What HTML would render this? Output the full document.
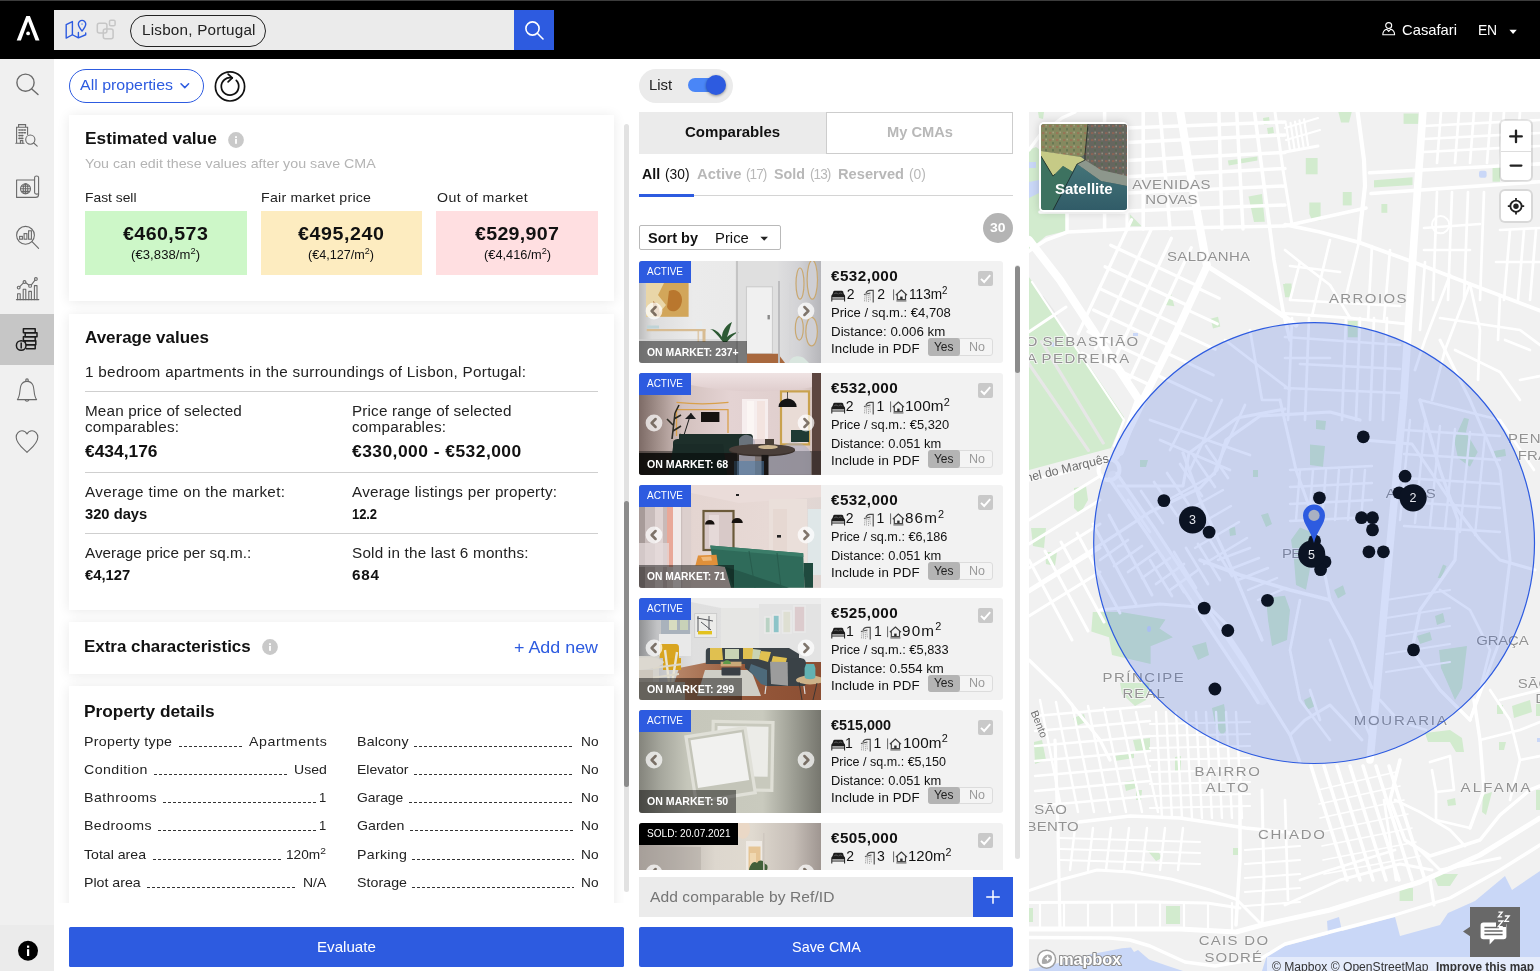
<!DOCTYPE html>
<html lang="en"><head><meta charset="utf-8"><title>Casafari CMA</title>
<style>
*{box-sizing:border-box;margin:0;padding:0}
html,body{width:1540px;height:971px;overflow:hidden;background:#fff}
body{position:relative;font-family:"Liberation Sans",sans-serif;color:#222}
.a{position:absolute}
.t{position:absolute;white-space:pre;line-height:1;color:#222;transform-origin:0 50%}
.card{position:absolute;left:69px;width:545px;background:#fff;box-shadow:0 1px 12px rgba(0,0,0,.09)}
.hr{position:absolute;left:85px;width:512.5px;height:1px;background:#cfcfcf}
.ld{position:absolute;height:1px;background:repeating-linear-gradient(90deg,#333 0,#333 3px,transparent 3px,transparent 5px)}
.item{position:absolute;left:639px;width:364px;background:#f2f2f2;border-radius:3px;overflow:hidden}
.bl{background:#2d5be0}
#root{position:absolute;left:0;top:0;width:1540px;height:971px;overflow:hidden;will-change:transform}
</style></head>
<body>
<div id="root">
<div class="a" style="left:0px;top:0px;width:1540px;height:59px;background:#000"></div>
<div class="a" style="left:0px;top:0px;width:1540px;height:1px;background:#3c3c3c"></div>
<svg class="a" style="left:14px;top:14px;" width="28" height="28" viewBox="0 0 28 28" ><polygon points="2.7,26.4 12.3,2 15.9,2 25.5,26.4 21.5,26.4 14.1,7.2 6.9,26.4" fill="#fff"/><circle cx="14.1" cy="19.4" r="1.9" fill="#fff"/></svg>
<div class="a" style="left:54px;top:10px;width:460px;height:40px;background:#ebebeb"></div>
<div class="a" style="left:514px;top:10px;width:40px;height:40px;background:#2d5be0"></div>
<svg class="a" style="left:522px;top:18px;" width="24" height="24" viewBox="0 0 24 24" ><circle cx="10.5" cy="10.5" r="6.6" fill="none" stroke="#fff" stroke-width="1.6"/><path d="M15.3 15.3 L21 21" stroke="#fff" stroke-width="1.6" stroke-linecap="round"/></svg>
<svg class="a" style="left:64px;top:18px;" width="26" height="24" viewBox="0 0 26 24" ><g fill="none" stroke="#2d5be0" stroke-width="1.4" stroke-linejoin="round" stroke-linecap="round"><path d="M2.2 6.6 L8.4 3.6 L8.4 16.75 L2.2 20.1 Z"/><path d="M8.4 16.75 L14.4 19.9 L21.7 16.75 L21.7 14.9 M14.4 14.4 L14.4 19.9"/><path d="M18.05 13.1 C16 10.6 14.35 8.4 14.35 6.1 A3.7 3.7 0 1 1 21.75 6.1 C21.75 8.4 20.1 10.6 18.05 13.1 Z"/></g><circle cx="18.05" cy="6.1" r="0.9" fill="#7fa2f2"/></svg>
<svg class="a" style="left:95px;top:18px;" width="24" height="24" viewBox="0 0 24 24" ><g fill="none" stroke="#c6c6c6" stroke-width="1.5"><rect x="2.3" y="5.2" width="9.6" height="9.8" rx="2"/><rect x="8.3" y="11.1" width="9.8" height="9.6" rx="2"/><rect x="14.5" y="2.2" width="5.6" height="5.5" rx="1.3"/></g></svg>
<div class="a" style="left:130px;top:15px;width:136px;height:31.5px;border:1.3px solid #222;border-radius:16px"></div>
<span class="t" style="left:141.50px;top:23.15px;font-size:14px;letter-spacing:0.196px;transform:scaleX(1.0900);">Lisbon, Portugal</span>
<svg class="a" style="left:1381px;top:21px;" width="16" height="16" viewBox="0 0 16 16" ><g fill="none" stroke="#fff" stroke-width="1.1" stroke-linejoin="round"><circle cx="7.7" cy="4.6" r="3"/><path d="M1.8 13.8 C1.8 10.4 4.3 8.6 5.6 8.2 L7.7 10.3 L9.8 8.2 C11.1 8.6 13.6 10.4 13.6 13.8 Z"/></g></svg>
<span class="t" style="left:1401.80px;top:22.40px;font-size:15px;color:#fff;transform:scaleX(0.9846);">Casafari</span>
<span class="t" style="left:1477.60px;top:22.40px;font-size:15px;color:#fff;letter-spacing:-0.199px;transform:scaleX(0.9300);">EN</span>
<svg class="a" style="left:1509px;top:29px;" width="9" height="6" viewBox="0 0 9 6" ><path d="M0.4 0.8 L7.8 0.8 L4.1 4.9 Z" fill="#fff"/></svg><div class="a" style="left:0px;top:59px;width:54px;height:866px;background:#f0f0f0"></div>
<div class="a" style="left:0px;top:925px;width:54px;height:46px;background:#ebebeb"></div>
<div class="a" style="left:0px;top:314px;width:54px;height:51px;background:#c6c6c6"></div>
<svg class="a" style="left:12px;top:70px;" width="30" height="30" viewBox="0 0 30 30" ><g fill="none" stroke="#6a6a6a" stroke-width="1.4" stroke-linecap="round"><circle cx="13.5" cy="12.7" r="8.6"/><path d="M19.8 19 L26 24.6"/></g></svg>
<svg class="a" style="left:12px;top:121px;" width="30" height="30" viewBox="0 0 30 30" ><g fill="none" stroke="#6a6a6a" stroke-width="1.1" stroke-linecap="round"><path d="M4.6 22.2 L4.6 6.2 L15.6 6.2 L15.6 13.5 M6.6 6.2 L6.6 3.6 L13.6 3.6 L13.6 6.2 M3.8 22.2 L12 22.2"/><path d="M7 9 h1.2 M9.6 9 h1.2 M12.2 9 h1.2 M7 11.8 h1.2 M9.6 11.8 h1.2 M12.2 11.8 h1.2 M7 14.6 h1.2 M9.6 14.6 h1.2 M7 17.4 h1.2 M9.6 17.4 h1.2" stroke-width="1.6"/><path d="M8.4 22.2 L8.4 19.6 L10.8 19.6 L10.8 22.2"/><circle cx="18.3" cy="18.6" r="4.6" fill="#f0f0f0"/><path d="M21.7 22 L25.2 25.2"/></g></svg>
<svg class="a" style="left:12px;top:172px;" width="30" height="30" viewBox="0 0 30 30" ><g fill="none" stroke="#6a6a6a" stroke-width="1.1" stroke-linejoin="round"><path d="M22.6 8 L4.6 8 L4.6 25.4 L23.6 25.4 C25.6 25.4 26.6 24 26.6 22.4 L26.6 5.4 C26.6 3.6 22.6 3.4 22.6 5.6 L22.6 20.4 C22.6 22.6 26.4 22.6 26.6 21"/><circle cx="13.5" cy="16.8" r="5"/><ellipse cx="13.5" cy="16.8" rx="2.3" ry="5"/><path d="M8.5 16.8 h10 M9.3 14.2 h8.4 M9.3 19.4 h8.4 M13.5 11.8 v10"/></g></svg>
<svg class="a" style="left:12px;top:223px;" width="30" height="30" viewBox="0 0 30 30" ><g fill="none" stroke="#6a6a6a" stroke-width="1.1" stroke-linecap="round"><circle cx="13.5" cy="12.3" r="8.9"/><path d="M20 18.6 L26.6 25.4"/><rect x="7.6" y="13.4" width="2.8" height="2.8"/><rect x="12.1" y="10.6" width="2.8" height="5.6"/><rect x="16.6" y="7.8" width="2.8" height="8.4"/></g></svg>
<svg class="a" style="left:12px;top:274px;" width="30" height="30" viewBox="0 0 30 30" ><g fill="none" stroke="#6a6a6a" stroke-width="1.1" stroke-linecap="round" stroke-linejoin="round"><path d="M4.4 25.6 h22.4"/><path d="M5.6 25.6 v-5.8 h2.6 v5.8 M11.2 25.6 v-10.4 h2.6 v10.4 M16.8 25.6 v-8.2 h2.6 v8.2 M22.4 25.6 v-14 h2.6 v14"/><path d="M7.8 12.6 L11.2 9.2 M13.8 8.8 L16.8 11 M19.4 10.8 L23 6.2"/><circle cx="6.7" cy="13.6" r="1.4"/><circle cx="12.5" cy="8" r="1.4"/><circle cx="18.1" cy="11.9" r="1.4"/><circle cx="23.9" cy="5" r="1.4"/></g></svg>
<svg class="a" style="left:12px;top:325px;" width="30" height="30" viewBox="0 0 30 30" ><g fill="none" stroke="#1c1c1c" stroke-width="1.5" stroke-linejoin="round"><rect x="11.4" y="3.8" width="11.8" height="3.9" /><rect x="13.2" y="7.7" width="11.8" height="4.1" /><rect x="11.4" y="11.8" width="11.8" height="4" /><rect x="13.2" y="15.8" width="10.6" height="4" /><path d="M14 19.8 h9.2 v4 h-9.2"/><circle cx="9.2" cy="20.5" r="4.8" fill="#c6c6c6"/><path d="M9.2 17.6 v5.8"/></g></svg>
<svg class="a" style="left:12px;top:376px;" width="30" height="30" viewBox="0 0 30 30" ><g fill="none" stroke="#6a6a6a" stroke-width="1.1" stroke-linejoin="round" stroke-linecap="round"><path d="M5.4 23.6 C8.6 19.6 7.4 13 9 9.4 C10.2 6.6 12.4 5.4 15 5.4 C17.6 5.4 19.8 6.6 21 9.4 C22.6 13 21.4 19.6 24.6 23.6 Z"/><circle cx="15" cy="4.2" r="1.3"/><path d="M13.2 23.8 C13.6 25.6 16.4 25.6 16.8 23.8"/></g></svg>
<svg class="a" style="left:12px;top:427px;" width="30" height="30" viewBox="0 0 30 30" ><path d="M15 25.4 C11 21.4 4.2 16.4 4.2 10.2 C4.2 6.4 7 3.8 10 3.8 C12.2 3.8 14 5 15 7 C16 5 17.8 3.8 20 3.8 C23 3.8 25.8 6.4 25.8 10.2 C25.8 16.4 19 21.4 15 25.4 Z" fill="none" stroke="#6a6a6a" stroke-width="1.1" stroke-linejoin="round"/></svg>
<svg class="a" style="left:17px;top:940px;" width="22" height="22" viewBox="0 0 22 22" ><circle cx="11" cy="10.7" r="10" fill="#000"/><rect x="10" y="9.2" width="2.2" height="6.8" fill="#fff"/><rect x="10" y="5.6" width="2.2" height="2.2" fill="#fff"/></svg><div class="a" style="left:69px;top:69px;width:135px;height:34px;border:1.2px solid #2d5be0;border-radius:17px"></div>
<span class="t" style="left:80.00px;top:77.30px;font-size:15px;color:#2d5be0;transform:scaleX(1.0623);">All properties</span>
<svg class="a" style="left:179px;top:81px;" width="12" height="10" viewBox="0 0 12 10" ><path d="M2 2.8 L5.8 6.6 L9.6 2.8" fill="none" stroke="#2d5be0" stroke-width="1.5" stroke-linecap="round" stroke-linejoin="round"/></svg>
<svg class="a" style="left:213px;top:69.5px;" width="34" height="34" viewBox="0 0 34 34" ><g fill="none" stroke="#111" stroke-width="1.7" stroke-linecap="round" stroke-linejoin="round"><circle cx="17" cy="16.4" r="14.6"/><path d="M23.26 10.36 A8.7 8.7 0 1 1 19.18 7.98"/><path d="M15.1 4.1 L19.3 7.9 L15.1 11.9"/></g></svg>
<div class="a" style="left:639px;top:69px;width:94px;height:34px;background:#ebebeb;border-radius:17px"></div>
<span class="t" style="left:649.30px;top:77.30px;font-size:15px;transform:scaleX(0.9938);">List</span>
<div class="a" style="left:688.3px;top:78.3px;width:33px;height:13.6px;background:#4a86f7;border-radius:7px"></div>
<div class="a" style="left:705.6px;top:75px;width:20px;height:20px;background:#2d5be0;border-radius:50%;box-shadow:0 1px 3px rgba(0,0,0,.4)"></div><div class="a" style="left:54px;top:106px;width:570px;height:797px;overflow:hidden">
<div class="a" style="left:-54px;top:-106px;width:1px;height:1px">
<div class="card" style="top:114.5px;height:186px"></div>
<span class="t" style="left:85.20px;top:130.29px;font-size:16.2px;font-weight:700;color:#111;transform:scaleX(1.0692);">Estimated value</span>
<svg class="a" style="left:226.6px;top:130.7px;" width="18" height="18" viewBox="0 0 18 18" ><circle cx="9" cy="9" r="7.9" fill="#c9c9c9"/><rect x="8.1" y="7.9" width="1.8" height="4.9" fill="#fff"/><rect x="8.1" y="5.2" width="1.8" height="1.8" fill="#fff"/></svg>
<span class="t" style="left:85.00px;top:156.57px;font-size:13.5px;color:#b4b4b4;transform:scaleX(1.0545);">You can edit these values after you save CMA</span>
<span class="t" style="left:85.00px;top:190.80px;font-size:13px;transform:scaleX(1.0639);">Fast sell</span>
<span class="t" style="left:260.80px;top:190.80px;font-size:13px;letter-spacing:0.212px;transform:scaleX(1.0900);">Fair market price</span>
<span class="t" style="left:436.50px;top:190.80px;font-size:13px;letter-spacing:0.379px;transform:scaleX(1.0900);">Out of market</span>
<div class="a" style="left:85px;top:211px;width:161.6px;height:63.6px;background:#cdf7c8"></div>
<span class="t" style="left:123.40px;top:224.76px;font-size:18px;font-weight:700;color:#111;letter-spacing:0.389px;transform:scaleX(1.0900);">€460,573</span>
<span class="t" style="left:131.20px;top:249.14px;font-size:12px;color:#111;letter-spacing:0.067px;transform:scaleX(1.0900);">(€3,838/m<span style="font-size:8.6px;position:relative;top:-5px;letter-spacing:0">2</span>)</span>
<div class="a" style="left:260.6px;top:211px;width:161.6px;height:63.6px;background:#fdecc0"></div>
<span class="t" style="left:298.40px;top:224.76px;font-size:18px;font-weight:700;color:#111;letter-spacing:0.546px;transform:scaleX(1.0900);">€495,240</span>
<span class="t" style="left:308.40px;top:249.14px;font-size:12px;color:#111;transform:scaleX(1.0507);">(€4,127/m<span style="font-size:8.6px;position:relative;top:-5px;letter-spacing:0">2</span>)</span>
<div class="a" style="left:436.2px;top:211px;width:161.6px;height:63.6px;background:#ffdfe1"></div>
<span class="t" style="left:475.10px;top:224.76px;font-size:18px;font-weight:700;color:#111;letter-spacing:0.258px;transform:scaleX(1.0900);">€529,907</span>
<span class="t" style="left:483.50px;top:249.14px;font-size:12px;color:#111;transform:scaleX(1.0667);">(€4,416/m<span style="font-size:8.6px;position:relative;top:-5px;letter-spacing:0">2</span>)</span>
<div class="card" style="top:313.5px;height:296.3px"></div>
<span class="t" style="left:85.00px;top:329.09px;font-size:16.2px;font-weight:700;color:#111;transform:scaleX(1.0492);">Average values</span>
<span class="t" style="left:85.00px;top:364.95px;font-size:14px;letter-spacing:0.271px;transform:scaleX(1.0900);">1 bedroom apartments in the surroundings of Lisbon, Portugal:</span>
<div class="hr" style="top:391px"></div>
<span class="t" style="left:85.00px;top:404.15px;font-size:14px;letter-spacing:0.143px;transform:scaleX(1.0900);">Mean price of selected</span>
<span class="t" style="left:85.00px;top:420.15px;font-size:14px;letter-spacing:0.199px;transform:scaleX(1.0900);">comparables:</span>
<span class="t" style="left:85.00px;top:443.66px;font-size:16px;font-weight:700;color:#111;transform:scaleX(1.0864);">€434,176</span>
<span class="t" style="left:351.80px;top:404.15px;font-size:14px;letter-spacing:0.142px;transform:scaleX(1.0900);">Price range of selected</span>
<span class="t" style="left:351.80px;top:420.15px;font-size:14px;letter-spacing:0.199px;transform:scaleX(1.0900);">comparables:</span>
<span class="t" style="left:351.80px;top:443.66px;font-size:16px;font-weight:700;color:#111;letter-spacing:0.419px;transform:scaleX(1.0900);">€330,000 - €532,000</span>
<div class="hr" style="top:472px"></div>
<span class="t" style="left:85.00px;top:485.15px;font-size:14px;letter-spacing:0.303px;transform:scaleX(1.0900);">Average time on the market:</span>
<span class="t" style="left:85.00px;top:506.85px;font-size:14px;font-weight:700;color:#111;transform:scaleX(1.0512);">320 days</span>
<span class="t" style="left:351.80px;top:485.15px;font-size:14px;letter-spacing:0.215px;transform:scaleX(1.0900);">Average listings per property:</span>
<span class="t" style="left:351.80px;top:506.85px;font-size:14px;font-weight:700;color:#111;letter-spacing:-0.123px;transform:scaleX(0.9300);">12.2</span>
<div class="hr" style="top:533px"></div>
<span class="t" style="left:85.00px;top:546.15px;font-size:14px;letter-spacing:0.009px;transform:scaleX(1.0900);">Average price per sq.m.:</span>
<span class="t" style="left:85.00px;top:568.35px;font-size:14px;font-weight:700;color:#111;transform:scaleX(1.0554);">€4,127</span>
<span class="t" style="left:351.80px;top:546.15px;font-size:14px;letter-spacing:0.189px;transform:scaleX(1.0900);">Sold in the last 6 months:</span>
<span class="t" style="left:351.80px;top:568.35px;font-size:14px;font-weight:700;color:#111;letter-spacing:0.706px;transform:scaleX(1.0900);">684</span>
<div class="card" style="top:621.8px;height:51.8px"></div>
<span class="t" style="left:84.30px;top:638.29px;font-size:16.2px;font-weight:700;color:#111;transform:scaleX(1.0466);">Extra characteristics</span>
<svg class="a" style="left:260.5px;top:637.8px;" width="18" height="18" viewBox="0 0 18 18" ><circle cx="9" cy="9" r="7.9" fill="#c9c9c9"/><rect x="8.1" y="7.9" width="1.8" height="4.9" fill="#fff"/><rect x="8.1" y="5.2" width="1.8" height="1.8" fill="#fff"/></svg>
<span class="t" style="left:514.30px;top:638.83px;font-size:16.5px;color:#2d5be0;transform:scaleX(1.0834);">+ Add new</span>
<div class="card" style="top:685.5px;height:260px"></div>
<span class="t" style="left:84.30px;top:702.79px;font-size:16.2px;font-weight:700;color:#111;transform:scaleX(1.0682);">Property details</span>
<span class="t" style="left:84.30px;top:735.00px;font-size:13px;letter-spacing:0.284px;transform:scaleX(1.0900);">Property type</span>
<span class="t" style="left:248.50px;top:735.00px;font-size:13px;letter-spacing:0.544px;transform:scaleX(1.0900);">Apartments</span>
<div class="ld" style="left:178.6px;top:745.5px;width:64.4px"></div>
<span class="t" style="left:357.00px;top:735.00px;font-size:13px;letter-spacing:0.166px;transform:scaleX(1.0900);">Balcony</span>
<span class="t" style="left:580.50px;top:735.00px;font-size:13px;transform:scaleX(1.0526);">No</span>
<div class="ld" style="left:413.8px;top:745.5px;width:160.0px"></div>
<span class="t" style="left:84.30px;top:763.00px;font-size:13px;letter-spacing:0.403px;transform:scaleX(1.0900);">Condition</span>
<span class="t" style="left:293.50px;top:763.00px;font-size:13px;transform:scaleX(1.0804);">Used</span>
<div class="ld" style="left:154.0px;top:773.5px;width:134.0px"></div>
<span class="t" style="left:357.00px;top:763.00px;font-size:13px;transform:scaleX(1.0796);">Elevator</span>
<span class="t" style="left:580.50px;top:763.00px;font-size:13px;transform:scaleX(1.0526);">No</span>
<div class="ld" style="left:413.8px;top:773.5px;width:160.0px"></div>
<span class="t" style="left:84.30px;top:791.00px;font-size:13px;letter-spacing:0.478px;transform:scaleX(1.0900);">Bathrooms</span>
<span class="t" style="left:319.07px;top:791.00px;font-size:13px;">1</span>
<div class="ld" style="left:163.3px;top:801.5px;width:152.5px"></div>
<span class="t" style="left:357.00px;top:791.00px;font-size:13px;transform:scaleX(1.0674);">Garage</span>
<span class="t" style="left:580.50px;top:791.00px;font-size:13px;transform:scaleX(1.0526);">No</span>
<div class="ld" style="left:408.6px;top:801.5px;width:165.2px"></div>
<span class="t" style="left:84.30px;top:819.00px;font-size:13px;letter-spacing:0.382px;transform:scaleX(1.0900);">Bedrooms</span>
<span class="t" style="left:319.07px;top:819.00px;font-size:13px;">1</span>
<div class="ld" style="left:158.1px;top:829.5px;width:157.7px"></div>
<span class="t" style="left:357.00px;top:819.00px;font-size:13px;transform:scaleX(1.0900);">Garden</span>
<span class="t" style="left:580.50px;top:819.00px;font-size:13px;transform:scaleX(1.0526);">No</span>
<div class="ld" style="left:409.6px;top:829.5px;width:164.2px"></div>
<span class="t" style="left:84.30px;top:848.00px;font-size:13px;transform:scaleX(1.0859);">Total area</span>
<span class="t" style="left:286.40px;top:848.00px;font-size:13px;transform:scaleX(1.0504);">120m<span style="font-size:9.8px;position:relative;top:-5.2px;letter-spacing:0">2</span></span>
<div class="ld" style="left:152.6px;top:858.5px;width:128.3px"></div>
<span class="t" style="left:357.00px;top:848.00px;font-size:13px;letter-spacing:0.268px;transform:scaleX(1.0900);">Parking</span>
<span class="t" style="left:580.50px;top:848.00px;font-size:13px;transform:scaleX(1.0526);">No</span>
<div class="ld" style="left:412.1px;top:858.5px;width:161.7px"></div>
<span class="t" style="left:84.30px;top:876.00px;font-size:13px;transform:scaleX(1.0894);">Plot area</span>
<span class="t" style="left:303.00px;top:876.00px;font-size:13px;transform:scaleX(1.0751);">N/A</span>
<div class="ld" style="left:147.3px;top:886.5px;width:150.2px"></div>
<span class="t" style="left:357.00px;top:876.00px;font-size:13px;letter-spacing:0.054px;transform:scaleX(1.0900);">Storage</span>
<span class="t" style="left:580.50px;top:876.00px;font-size:13px;transform:scaleX(1.0526);">No</span>
<div class="ld" style="left:412.3px;top:886.5px;width:161.5px"></div>
</div></div>
<div class="a" style="left:624.2px;top:124px;width:5.3px;height:768px;background:#e2e2e2;border-radius:3px"></div>
<div class="a" style="left:624.2px;top:501px;width:5.3px;height:286px;background:#8c8c8c;border-radius:3px"></div>
<div class="a" style="left:69px;top:927px;width:554.5px;height:40px;background:#2d5be0;border-radius:1.5px"></div>
<span class="t" style="left:316.90px;top:939.93px;font-size:14.5px;color:#fff;transform:scaleX(1.0419);">Evaluate</span><div class="a" style="left:639px;top:112px;width:187px;height:41.5px;background:#ebebeb"></div>
<div class="a" style="left:826px;top:112px;width:187px;height:41.5px;background:#fff;border:1px solid #cdcdcd"></div>
<span class="t" style="left:684.80px;top:124.64px;font-size:14.6px;font-weight:700;color:#111;transform:scaleX(1.0295);">Comparables</span>
<span class="t" style="left:886.60px;top:124.64px;font-size:14.6px;font-weight:700;color:#b8b8b8;transform:scaleX(1.0048);">My CMAs</span>
<span class="t" style="left:641.80px;top:166.84px;font-size:14.6px;font-weight:700;color:#111;transform:scaleX(0.9702);">All</span>
<span class="t" style="left:665.00px;top:166.84px;font-size:14.6px;color:#111;transform:scaleX(0.9440);">(30)</span>
<span class="t" style="left:697.00px;top:166.84px;font-size:14.6px;font-weight:700;color:#b8b8b8;transform:scaleX(1.0157);">Active</span>
<span class="t" style="left:746.30px;top:166.84px;font-size:14.6px;color:#b8b8b8;letter-spacing:-1.000px;transform:scaleX(0.9300);">(17)</span>
<span class="t" style="left:774.40px;top:166.84px;font-size:14.6px;font-weight:700;color:#b8b8b8;transform:scaleX(0.9802);">Sold</span>
<span class="t" style="left:810.30px;top:166.84px;font-size:14.6px;color:#b8b8b8;letter-spacing:-1.000px;transform:scaleX(0.9300);">(13)</span>
<span class="t" style="left:838.30px;top:166.84px;font-size:14.6px;font-weight:700;color:#b8b8b8;transform:scaleX(1.0043);">Reserved</span>
<span class="t" style="left:909.20px;top:166.84px;font-size:14.6px;color:#b8b8b8;transform:scaleX(0.9471);">(0)</span>
<div class="a" style="left:639px;top:194.6px;width:374px;height:1px;background:#d4d4d4"></div>
<div class="a" style="left:639px;top:193.8px;width:54.6px;height:3.2px;background:#2d5be0"></div>
<div class="a" style="left:639px;top:225.2px;width:141.5px;height:25.3px;border:1px solid #b9b9b9;border-radius:2px;background:#fff"></div>
<span class="t" style="left:648.00px;top:230.64px;font-size:14.6px;font-weight:700;color:#111;transform:scaleX(0.9944);">Sort by</span>
<span class="t" style="left:714.50px;top:230.64px;font-size:14.6px;color:#111;transform:scaleX(1.0165);">Price</span>
<svg class="a" style="left:759.5px;top:236px;" width="9" height="6" viewBox="0 0 9 6" ><path d="M0.4 0.8 L8 0.8 L4.2 4.8 Z" fill="#222"/></svg>
<div class="a" style="left:982.7px;top:213px;width:30px;height:30px;background:#b4b4b4;border-radius:50%"></div>
<span class="t" style="left:989.85px;top:221.30px;font-size:13px;font-weight:700;color:#fff;transform:scaleX(1.0713);">30</span>
<div class="a" style="left:630px;top:255px;width:390px;height:614.6px;overflow:hidden">
<div class="a" style="left:-630px;top:-255px;width:1px;height:1px">
<div class="item" style="top:261px;height:102px"></div>
<svg class="a" style="left:639px;top:261px;border-radius:3px 0 0 3px" width="182" height="102" viewBox="0 0 182 102" preserveAspectRatio="none"><defs><linearGradient id="p1a" x1="0" x2="1" y1="0" y2="0"><stop offset="0" stop-color="#bcbcbc"/><stop offset=".07" stop-color="#dcdcdc"/><stop offset=".3" stop-color="#ebebeb"/><stop offset="1" stop-color="#e6e6e6"/></linearGradient>
<linearGradient id="p1b" x1="0" x2="1"><stop offset="0" stop-color="#dededf"/><stop offset=".5" stop-color="#d2d2d5"/><stop offset="1" stop-color="#b6b6ba"/></linearGradient></defs>
<rect width="182" height="102" fill="url(#p1a)"/>
<rect x="96.6" width="43" height="102" fill="#dfdfdf"/>
<rect x="139" width="43" height="102" fill="url(#p1b)"/>
<rect x="0" y="78" width="97" height="24" fill="#d2d2d2" opacity=".7"/>
<rect x="7" y="22" width="42.6" height="33.8" fill="#d2a65a"/>
<path d="M7 22 h18 l-6 12 l8 10 l-10 11.8 h-10z" fill="#e9d6a8"/><path d="M30 30 c8 -4 16 4 12 14 c-3 8 -12 8 -14 2z" fill="#b9772e"/>
<path d="M14 40 c4 2 8 8 6 15 h-6z" fill="#a96a2a" opacity=".7"/>
<rect x="7.7" y="68" width="59" height="2.2" fill="#d8bc92"/><rect x="63.5" y="70" width="3" height="11" fill="#d8bc92"/><rect x="58.5" y="70" width="1.6" height="11" fill="#d8bc92" opacity=".7"/>
<rect x="8" y="64.5" width="12" height="3" fill="#bfd3d6"/><rect x="57" y="60" width="6" height="8" fill="#e8ecee"/>
<path d="M84 81 c-6 -8 -10 -12 -13 -13 c5 0 9 3 12 8 c0 -6 4 -12 10 -15 c-2 5 -3 10 -5 15 c3 -3 8 -5 12 -5 c-5 2 -9 6 -12 10z" fill="#2d5a34"/>
<rect x="97" y="0" width="2" height="102" fill="#c4c4c4"/>
<rect x="107.4" y="25.8" width="26" height="67" fill="#f0f0f0" stroke="#cacaca" stroke-width="1"/>
<rect x="128.5" y="54" width="2.4" height="4.4" fill="#8a8a8a"/>
<path d="M108 92.7 L139 92.7 L146 102 L108 102 Z" fill="#a8683e"/>
<rect x="139" y="20" width="2" height="102" fill="#bdbdbf"/><rect x="150" y="22" width="2.4" height="72" fill="#d6d6d8"/>
<g fill="#cfcfd4" stroke="#c9a870" stroke-width="1.2"><ellipse cx="161" cy="22.6" rx="4" ry="15.6"/><ellipse cx="173.3" cy="18.7" rx="5.2" ry="19.5"/><ellipse cx="160.3" cy="67.4" rx="4" ry="11.7"/><ellipse cx="172.6" cy="70.6" rx="5.8" ry="14.3"/></g>
<path d="M150 102 c2 -8 12 -8 16 -4 l4 4z" fill="#d9e6df"/></svg>
<div class="a" style="left:639px;top:261px;width:52px;height:21.8px;background:#2d5be0;border-radius:3px 0 0 0"></div>
<span class="t" style="left:647.00px;top:267.38px;font-size:10.3px;color:#fff;transform:scaleX(0.9677);">ACTIVE</span>
<div class="a" style="left:639px;top:341.4px;width:108px;height:21.599999999999994px;background:rgba(0,0,0,.45);border-radius:0 0 0 3px"></div>
<span class="t" style="left:647.00px;top:347.77px;font-size:10.2px;font-weight:700;color:#fff;transform:scaleX(1.0208);">ON MARKET: 237+</span>
<svg class="a" style="left:645px;top:302px;" width="18" height="18" viewBox="0 0 18 18" ><g transform="translate(9,9)"><circle r="8.4" fill="rgba(255,255,255,.72)"/><path d="M1.6 -4 L-2.4 0 L1.6 4" fill="none" stroke="rgba(80,66,54,.72)" stroke-width="2.5" stroke-linecap="round" stroke-linejoin="round"/></g></svg>
<svg class="a" style="left:797px;top:302px;" width="18" height="18" viewBox="0 0 18 18" ><g transform="translate(9,9)"><circle r="8.4" fill="rgba(255,255,255,.72)"/><path d="M-1.6 -4 L2.4 0 L-1.6 4" fill="none" stroke="rgba(80,66,54,.72)" stroke-width="2.5" stroke-linecap="round" stroke-linejoin="round"/></g></svg>
<span class="t" style="left:831.00px;top:269.25px;font-size:14px;font-weight:700;color:#111;letter-spacing:0.411px;transform:scaleX(1.0900);">€532,000</span>
<svg class="a" style="left:831px;top:290.4px;" width="15" height="12" viewBox="0 0 15 12" ><g fill="#1c1c1c"><path d="M0.3 11.6 L0.3 6.2 C0.3 5.4 0.6 5 1.2 4.6 L13.2 4.6 C13.8 5 14.1 5.4 14.1 6.2 L14.1 11.6 L13.1 11.6 L13.1 9.6 L1.3 9.6 L1.3 11.6 Z"/><path d="M1.2 5 L2.4 1.4 C2.6 0.9 3 0.7 3.6 0.7 L10.8 0.7 C11.4 0.7 11.8 0.9 12 1.4 L13.2 5 Z"/></g><path d="M3.2 4.2 C3.4 2.6 6.6 2.6 6.9 4.2 M7.5 4.2 C7.8 2.6 11 2.6 11.2 4.2" stroke="#777" stroke-width="0.7" fill="none"/><rect x="1.3" y="7.3" width="11.8" height="1.3" fill="#d8d8d8"/></svg>
<span class="t" style="left:846.70px;top:287.25px;font-size:14px;color:#111;">2</span>
<svg class="a" style="left:863px;top:289.2px;" width="12" height="14" viewBox="0 0 12 14" ><g fill="none" stroke="#4a4a4a" stroke-width="1.15"><path d="M10.2 13.6 L10.2 1.4 L7 1.4 C5 1.4 3.6 2.6 3 4"/></g><path d="M0.8 4.9 L7.4 3.4 L7.6 4.4 L1 5.9 Z" fill="#4a4a4a"/><g stroke="#8a8a8a" stroke-width="0.75" stroke-dasharray="1.3 0.8" fill="none"><path d="M2 6.4 L1.4 13 M3.6 6.2 L3.4 13 M5.2 5.8 L5.6 13 M6.8 5.4 L7.4 12"/></g></svg>
<span class="t" style="left:877.30px;top:287.25px;font-size:14px;color:#111;">2</span>
<svg class="a" style="left:892.7px;top:289.4px;" width="15" height="14" viewBox="0 0 15 14" ><path d="M0.6 0.4 L0.6 11.2" stroke="#555" stroke-width="0.9"/><g fill="none" stroke="#3a3a3a" stroke-width="1.15" stroke-linejoin="round"><path d="M2.8 6.2 L8.4 1 L14 6.2 M4.3 5.2 L4.3 10.6 L12.5 10.6 L12.5 5.2"/></g><rect x="7.2" y="7.6" width="2.4" height="3" fill="#2a2a2a"/><rect x="3.4" y="10.8" width="10" height="1.9" fill="#8e8e8e"/></svg>
<span class="t" style="left:909.00px;top:287.25px;font-size:14px;color:#111;transform:scaleX(0.9735);">113m<span style="font-size:10px;position:relative;top:-5.6px;letter-spacing:0">2</span></span>
<span class="t" style="left:831.00px;top:307.27px;font-size:12.2px;color:#111;transform:scaleX(1.0717);">Price / sq.m.: €4,708</span>
<span class="t" style="left:831.00px;top:326.27px;font-size:12.2px;color:#111;letter-spacing:0.031px;transform:scaleX(1.0900);">Distance: 0.006 km</span>
<span class="t" style="left:831.00px;top:343.47px;font-size:12.2px;color:#111;letter-spacing:0.097px;transform:scaleX(1.0900);">Include in PDF</span>
<div class="a" style="left:928px;top:338.3px;width:65px;height:17.4px;border:1px solid #dcdcdc;border-radius:3px;background:#f4f4f4"></div>
<div class="a" style="left:928px;top:338.3px;width:32px;height:17.4px;background:#b4b4b4;border-radius:3px"></div>
<span class="t" style="left:934.25px;top:340.54px;font-size:12px;transform:scaleX(0.9960);">Yes</span>
<span class="t" style="left:968.50px;top:340.54px;font-size:12px;color:#9a9a9a;transform:scaleX(1.0428);">No</span>
<svg class="a" style="left:978px;top:271px;" width="15" height="15" viewBox="0 0 15 15" ><rect width="15" height="15" rx="2" fill="#c9c9c9"/><path d="M3 7.8 L6.2 11 L12.2 4.2" fill="none" stroke="#fff" stroke-width="1.9"/></svg>
<div class="item" style="top:373px;height:101.8px"></div>
<svg class="a" style="left:639px;top:373px;border-radius:3px 0 0 3px" width="182" height="101.8" viewBox="0 0 182 101.8" preserveAspectRatio="none"><defs><linearGradient id="p2a" x1="0" x2="1"><stop offset="0" stop-color="#7d6b66"/><stop offset=".12" stop-color="#a89691"/><stop offset=".24" stop-color="#d3c1be"/><stop offset=".5" stop-color="#e4d3d3"/><stop offset=".9" stop-color="#dfcecc"/><stop offset="1" stop-color="#c8b7b3"/></linearGradient>
<linearGradient id="p2b" x1="0" x2="0" y1="0" y2="1"><stop offset="0" stop-color="#efe3e3"/><stop offset="1" stop-color="#dfcdcd"/></linearGradient></defs>
<rect width="182" height="101.8" fill="url(#p2a)"/>
<path d="M52 0 H174 V14 C140 20 90 20 52 12Z" fill="url(#p2b)"/>
<rect x="103" y="26" width="26" height="40" fill="#f6eeee"/><rect x="108" y="28" width="7" height="38" fill="#fbf6f4"/><rect x="118" y="28" width="8" height="38" fill="#f3e4e0"/>
<g fill="none" stroke="#d9a04a" stroke-width="1.3"><path d="M37.5 29.4 C55 31.4 72 31.4 89.5 29.4"/><path d="M37.5 63 V36.6 H89 V60"/></g>
<rect x="62" y="39" width="18.4" height="10" fill="#15120f"/>
<path d="M33 66 L36 40 M36 40 l4 -8 M35 46 l7 -4 M34 52 l-6 -6 M34 58 l8 -5" stroke="#2b2a22" stroke-width="1.6" fill="none"/>
<path d="M46 46 l6 -6 l5 6z" fill="#1b1b1b"/><path d="M52 40 L45 62" stroke="#1b1b1b" stroke-width="1"/>
<rect x="142" y="18.4" width="28" height="53" fill="#e9dcd6" stroke="#c9a24e" stroke-width="2.2"/>
<rect x="152" y="57" width="18" height="12" fill="#1f3a33"/>
<path d="M139.5 34 a9.1 8.6 0 0 1 18.2 0z" fill="#141414"/><rect x="148.2" y="19" width=".8" height="7" fill="#333"/>
<rect x="173" width="9" height="101.8" fill="#5d4640"/>
<rect x="0" y="78" width="182" height="24" fill="#2a2624" opacity=".55"/><rect x="0" y="80" width="100" height="22" fill="#161412" opacity=".8"/>
<path d="M40 62 C40 60 42 61 44 61 H110 C113 61 114 62 114 65 V80 H34 V70 C34 67 36 66 40 66Z" fill="#1d2f2a"/>
<path d="M34 74 C34 71 36 71 38 71 H84 L88 101.8 H30Z" fill="#1a2b27"/>
<path d="M100 101.8 V66 C104 60 112 60 116 68 V101.8Z M124 101.8 C126 74 150 70 162 80 V101.8Z M140 101.8 V78 C146 66 166 66 172 80 V101.8Z" fill="#a9acc0" opacity=".55"/>
<ellipse cx="123" cy="77.4" rx="33" ry="6" fill="#3a302c"/><ellipse cx="123" cy="76.4" rx="33" ry="5.4" fill="#4a3f3a"/>
<rect x="122.5" y="82" width="7" height="20" fill="#191615"/>
<ellipse cx="129" cy="74" rx="10" ry="2" fill="#cdb690"/><rect x="126" y="66" width="9" height="6" fill="#4a4038"/>
<rect x="95" y="88" width="30" height="14" fill="#4d7aa6" opacity=".55"/></svg>
<div class="a" style="left:639px;top:373px;width:52px;height:21.8px;background:#2d5be0;border-radius:3px 0 0 0"></div>
<span class="t" style="left:647.00px;top:379.38px;font-size:10.3px;color:#fff;transform:scaleX(0.9677);">ACTIVE</span>
<div class="a" style="left:639px;top:453.4px;width:97.7px;height:21.39999999999999px;background:rgba(0,0,0,.45);border-radius:0 0 0 3px"></div>
<span class="t" style="left:647.00px;top:459.77px;font-size:10.2px;font-weight:700;color:#fff;transform:scaleX(1.0394);">ON MARKET: 68</span>
<svg class="a" style="left:645px;top:414px;" width="18" height="18" viewBox="0 0 18 18" ><g transform="translate(9,9)"><circle r="8.4" fill="rgba(255,255,255,.72)"/><path d="M1.6 -4 L-2.4 0 L1.6 4" fill="none" stroke="rgba(80,66,54,.72)" stroke-width="2.5" stroke-linecap="round" stroke-linejoin="round"/></g></svg>
<svg class="a" style="left:797px;top:414px;" width="18" height="18" viewBox="0 0 18 18" ><g transform="translate(9,9)"><circle r="8.4" fill="rgba(255,255,255,.72)"/><path d="M-1.6 -4 L2.4 0 L-1.6 4" fill="none" stroke="rgba(80,66,54,.72)" stroke-width="2.5" stroke-linecap="round" stroke-linejoin="round"/></g></svg>
<span class="t" style="left:831.00px;top:381.25px;font-size:14px;font-weight:700;color:#111;letter-spacing:0.411px;transform:scaleX(1.0900);">€532,000</span>
<svg class="a" style="left:831px;top:402.4px;" width="15" height="12" viewBox="0 0 15 12" ><g fill="#1c1c1c"><path d="M0.3 11.6 L0.3 6.2 C0.3 5.4 0.6 5 1.2 4.6 L13.2 4.6 C13.8 5 14.1 5.4 14.1 6.2 L14.1 11.6 L13.1 11.6 L13.1 9.6 L1.3 9.6 L1.3 11.6 Z"/><path d="M1.2 5 L2.4 1.4 C2.6 0.9 3 0.7 3.6 0.7 L10.8 0.7 C11.4 0.7 11.8 0.9 12 1.4 L13.2 5 Z"/></g><path d="M3.2 4.2 C3.4 2.6 6.6 2.6 6.9 4.2 M7.5 4.2 C7.8 2.6 11 2.6 11.2 4.2" stroke="#777" stroke-width="0.7" fill="none"/><rect x="1.3" y="7.3" width="11.8" height="1.3" fill="#d8d8d8"/></svg>
<span class="t" style="left:845.70px;top:399.25px;font-size:14px;color:#111;">2</span>
<svg class="a" style="left:862.8px;top:401.2px;" width="12" height="14" viewBox="0 0 12 14" ><g fill="none" stroke="#4a4a4a" stroke-width="1.15"><path d="M10.2 13.6 L10.2 1.4 L7 1.4 C5 1.4 3.6 2.6 3 4"/></g><path d="M0.8 4.9 L7.4 3.4 L7.6 4.4 L1 5.9 Z" fill="#4a4a4a"/><g stroke="#8a8a8a" stroke-width="0.75" stroke-dasharray="1.3 0.8" fill="none"><path d="M2 6.4 L1.4 13 M3.6 6.2 L3.4 13 M5.2 5.8 L5.6 13 M6.8 5.4 L7.4 12"/></g></svg>
<span class="t" style="left:876.50px;top:399.25px;font-size:14px;color:#111;">1</span>
<svg class="a" style="left:889.9px;top:401.4px;" width="15" height="14" viewBox="0 0 15 14" ><path d="M0.6 0.4 L0.6 11.2" stroke="#555" stroke-width="0.9"/><g fill="none" stroke="#3a3a3a" stroke-width="1.15" stroke-linejoin="round"><path d="M2.8 6.2 L8.4 1 L14 6.2 M4.3 5.2 L4.3 10.6 L12.5 10.6 L12.5 5.2"/></g><rect x="7.2" y="7.6" width="2.4" height="3" fill="#2a2a2a"/><rect x="3.4" y="10.8" width="10" height="1.9" fill="#8e8e8e"/></svg>
<span class="t" style="left:905.30px;top:399.25px;font-size:14px;color:#111;letter-spacing:0.104px;transform:scaleX(1.0900);">100m<span style="font-size:10px;position:relative;top:-5.6px;letter-spacing:0">2</span></span>
<span class="t" style="left:831.00px;top:419.27px;font-size:12.2px;color:#111;transform:scaleX(1.0574);">Price / sq.m.: €5,320</span>
<span class="t" style="left:831.00px;top:438.27px;font-size:12.2px;color:#111;transform:scaleX(1.0563);">Distance: 0.051 km</span>
<span class="t" style="left:831.00px;top:455.47px;font-size:12.2px;color:#111;letter-spacing:0.097px;transform:scaleX(1.0900);">Include in PDF</span>
<div class="a" style="left:928px;top:450.3px;width:65px;height:17.4px;border:1px solid #dcdcdc;border-radius:3px;background:#f4f4f4"></div>
<div class="a" style="left:928px;top:450.3px;width:32px;height:17.4px;background:#b4b4b4;border-radius:3px"></div>
<span class="t" style="left:934.25px;top:452.54px;font-size:12px;transform:scaleX(0.9960);">Yes</span>
<span class="t" style="left:968.50px;top:452.54px;font-size:12px;color:#9a9a9a;transform:scaleX(1.0428);">No</span>
<svg class="a" style="left:978px;top:383px;" width="15" height="15" viewBox="0 0 15 15" ><rect width="15" height="15" rx="2" fill="#c9c9c9"/><path d="M3 7.8 L6.2 11 L12.2 4.2" fill="none" stroke="#fff" stroke-width="1.9"/></svg>
<div class="item" style="top:485px;height:102.8px"></div>
<svg class="a" style="left:639px;top:485px;border-radius:3px 0 0 3px" width="182" height="102.8" viewBox="0 0 182 102.8" preserveAspectRatio="none"><defs><linearGradient id="p3a" x1="0" x2="1"><stop offset="0" stop-color="#9f9391"/><stop offset=".06" stop-color="#c5b8b5"/><stop offset=".3" stop-color="#e4d5d1"/><stop offset=".7" stop-color="#e7d9d5"/><stop offset="1" stop-color="#e0d6d3"/></linearGradient></defs>
<rect width="182" height="102.8" fill="url(#p3a)"/>
<rect x="0" y="0" width="52" height="102.8" fill="#dccfcd"/>
<rect x="0" width="6" height="102.8" fill="#a79b99"/><rect x="6" width="10" height="102.8" fill="#c8bcbb"/><rect x="16" width="8" height="102.8" fill="#dfd3d2"/><rect x="24" width="4" height="102.8" fill="#c9bab8"/>
<rect x="28" y="20" width="6" height="62" fill="#e9a898"/><rect x="34" width="8" height="102.8" fill="#f1eae9"/><rect x="42" width="1.2" height="102.8" fill="#cbbfbd"/>
<rect x="0" y="58" width="30" height="24" fill="#e6dcdb" opacity=".7"/>
<path d="M52 0 H182 V12 L100 18 L52 8Z" fill="#eadcd9"/>
<rect x="130" y="14" width="38" height="70" fill="#eadfda"/><rect x="134" y="24" width="14" height="50" fill="#e6d8d2"/><rect x="150" y="26" width="14" height="52" fill="#eadfda"/>
<rect x="168.7" y="24" width="13.3" height="66" fill="#dfe7e8"/>
<rect x="138" y="50" width="4" height="2.6" fill="#222"/>
<rect x="64.5" y="26" width="30" height="39" fill="#d8c9c8" stroke="#6b5a3a" stroke-width="2.2"/>
<rect x="70" y="30" width="10" height="32" fill="#e8dddc" opacity=".8"/>
<path d="M66 39.4 a4.8 4.4 0 0 1 9.6 0z M92.6 38 a5.6 5 0 0 1 11.2 0z" fill="#16110e"/>
<rect x="97" y="9" width="3" height="2" fill="#222"/>
<path d="M71.3 60.5 L164.2 68.3 L165.5 102.8 H92 L86 82 L74 80Z" fill="#2f6b5a"/>
<path d="M71.3 60.5 L164.2 68.3 L164.4 72 L72 64Z" fill="#3b7d69"/>
<path d="M110 66 L116 102.8 M138 68 L142 102.8" stroke="#285c4d" stroke-width="1"/>
<path d="M164.5 78 H174 V102.8 H165.5Z" fill="#1f4a3e"/>
<path d="M59 70.5 L77.5 69.7 L79 80 L56.4 80.5Z" fill="#e0903a"/><path d="M62 72 l10 -.6 l1 4 l-9 .6z" fill="#f0b878"/>
<path d="M95 102.8 L86 82 L100 86 L150 102.8Z" fill="#26594b"/></svg>
<div class="a" style="left:639px;top:485px;width:52px;height:21.8px;background:#2d5be0;border-radius:3px 0 0 0"></div>
<span class="t" style="left:647.00px;top:491.38px;font-size:10.3px;color:#fff;transform:scaleX(0.9677);">ACTIVE</span>
<div class="a" style="left:639px;top:565.4px;width:94.7px;height:22.39999999999999px;background:rgba(0,0,0,.45);border-radius:0 0 0 3px"></div>
<span class="t" style="left:647.00px;top:571.77px;font-size:10.2px;font-weight:700;color:#fff;transform:scaleX(1.0048);">ON MARKET: 71</span>
<svg class="a" style="left:645px;top:526px;" width="18" height="18" viewBox="0 0 18 18" ><g transform="translate(9,9)"><circle r="8.4" fill="rgba(255,255,255,.72)"/><path d="M1.6 -4 L-2.4 0 L1.6 4" fill="none" stroke="rgba(80,66,54,.72)" stroke-width="2.5" stroke-linecap="round" stroke-linejoin="round"/></g></svg>
<svg class="a" style="left:797px;top:526px;" width="18" height="18" viewBox="0 0 18 18" ><g transform="translate(9,9)"><circle r="8.4" fill="rgba(255,255,255,.72)"/><path d="M-1.6 -4 L2.4 0 L-1.6 4" fill="none" stroke="rgba(80,66,54,.72)" stroke-width="2.5" stroke-linecap="round" stroke-linejoin="round"/></g></svg>
<span class="t" style="left:831.00px;top:493.25px;font-size:14px;font-weight:700;color:#111;letter-spacing:0.411px;transform:scaleX(1.0900);">€532,000</span>
<svg class="a" style="left:831px;top:514.4px;" width="15" height="12" viewBox="0 0 15 12" ><g fill="#1c1c1c"><path d="M0.3 11.6 L0.3 6.2 C0.3 5.4 0.6 5 1.2 4.6 L13.2 4.6 C13.8 5 14.1 5.4 14.1 6.2 L14.1 11.6 L13.1 11.6 L13.1 9.6 L1.3 9.6 L1.3 11.6 Z"/><path d="M1.2 5 L2.4 1.4 C2.6 0.9 3 0.7 3.6 0.7 L10.8 0.7 C11.4 0.7 11.8 0.9 12 1.4 L13.2 5 Z"/></g><path d="M3.2 4.2 C3.4 2.6 6.6 2.6 6.9 4.2 M7.5 4.2 C7.8 2.6 11 2.6 11.2 4.2" stroke="#777" stroke-width="0.7" fill="none"/><rect x="1.3" y="7.3" width="11.8" height="1.3" fill="#d8d8d8"/></svg>
<span class="t" style="left:845.70px;top:511.25px;font-size:14px;color:#111;">2</span>
<svg class="a" style="left:862.8px;top:513.2px;" width="12" height="14" viewBox="0 0 12 14" ><g fill="none" stroke="#4a4a4a" stroke-width="1.15"><path d="M10.2 13.6 L10.2 1.4 L7 1.4 C5 1.4 3.6 2.6 3 4"/></g><path d="M0.8 4.9 L7.4 3.4 L7.6 4.4 L1 5.9 Z" fill="#4a4a4a"/><g stroke="#8a8a8a" stroke-width="0.75" stroke-dasharray="1.3 0.8" fill="none"><path d="M2 6.4 L1.4 13 M3.6 6.2 L3.4 13 M5.2 5.8 L5.6 13 M6.8 5.4 L7.4 12"/></g></svg>
<span class="t" style="left:876.50px;top:511.25px;font-size:14px;color:#111;">1</span>
<svg class="a" style="left:889.9px;top:513.4px;" width="15" height="14" viewBox="0 0 15 14" ><path d="M0.6 0.4 L0.6 11.2" stroke="#555" stroke-width="0.9"/><g fill="none" stroke="#3a3a3a" stroke-width="1.15" stroke-linejoin="round"><path d="M2.8 6.2 L8.4 1 L14 6.2 M4.3 5.2 L4.3 10.6 L12.5 10.6 L12.5 5.2"/></g><rect x="7.2" y="7.6" width="2.4" height="3" fill="#2a2a2a"/><rect x="3.4" y="10.8" width="10" height="1.9" fill="#8e8e8e"/></svg>
<span class="t" style="left:905.30px;top:511.25px;font-size:14px;color:#111;letter-spacing:0.994px;transform:scaleX(1.0900);">86m<span style="font-size:10px;position:relative;top:-5.6px;letter-spacing:0">2</span></span>
<span class="t" style="left:831.00px;top:531.27px;font-size:12.2px;color:#111;transform:scaleX(1.0404);">Price / sq.m.: €6,186</span>
<span class="t" style="left:831.00px;top:550.27px;font-size:12.2px;color:#111;transform:scaleX(1.0563);">Distance: 0.051 km</span>
<span class="t" style="left:831.00px;top:567.47px;font-size:12.2px;color:#111;letter-spacing:0.097px;transform:scaleX(1.0900);">Include in PDF</span>
<div class="a" style="left:928px;top:562.3px;width:65px;height:17.4px;border:1px solid #dcdcdc;border-radius:3px;background:#f4f4f4"></div>
<div class="a" style="left:928px;top:562.3px;width:32px;height:17.4px;background:#b4b4b4;border-radius:3px"></div>
<span class="t" style="left:934.25px;top:564.54px;font-size:12px;transform:scaleX(0.9960);">Yes</span>
<span class="t" style="left:968.50px;top:564.54px;font-size:12px;color:#9a9a9a;transform:scaleX(1.0428);">No</span>
<svg class="a" style="left:978px;top:495px;" width="15" height="15" viewBox="0 0 15 15" ><rect width="15" height="15" rx="2" fill="#c9c9c9"/><path d="M3 7.8 L6.2 11 L12.2 4.2" fill="none" stroke="#fff" stroke-width="1.9"/></svg>
<div class="item" style="top:597.8px;height:102px"></div>
<svg class="a" style="left:639px;top:597.8px;border-radius:3px 0 0 3px" width="182" height="102" viewBox="0 0 182 102" preserveAspectRatio="none"><defs><linearGradient id="p4a" x1="0" x2="1"><stop offset="0" stop-color="#8f9092"/><stop offset=".1" stop-color="#c2c3c5"/><stop offset=".3" stop-color="#dfdfdf"/><stop offset="1" stop-color="#e2e2e2"/></linearGradient>
<linearGradient id="p4f" x1="0" x2="1"><stop offset="0" stop-color="#b98a6c"/><stop offset=".5" stop-color="#96583a"/><stop offset="1" stop-color="#8a4e33"/></linearGradient></defs>
<rect width="182" height="102" fill="url(#p4a)"/>
<path d="M52 0 H182 V6 L120 12 L82 10 L52 4Z" fill="#ededed"/>
<rect x="82" y="10" width="38" height="50" fill="#e6e6e4"/>
<rect x="120" y="6" width="62" height="64" fill="#e3e3e3"/>
<rect x="22" y="20" width="29" height="16" fill="#a9b2bc"/><rect x="30" y="22" width="8" height="10" fill="#d8dcc0"/><rect x="41" y="22" width="8" height="10" fill="#c8d2b8"/>
<rect x="20" y="36" width="32" height="22" fill="#e9e9e9"/>
<rect x="55.7" y="15.6" width="22" height="24" fill="#ececea" stroke="#c8c8c8" stroke-width=".8"/>
<path d="M58 20 l16 3 M59 18 v16 M70 18 v14 M62 24 l10 8" stroke="#55575c" stroke-width="1" fill="none"/><rect x="59" y="33" width="14" height="3.4" fill="#e3c21e"/>
<g stroke="#e9e9e9" stroke-width="1.6"><rect x="126" y="19" width="5.4" height="16" fill="#b9d2c4"/><rect x="134" y="17" width="6.4" height="18" fill="#8cc4c8"/><rect x="143.6" y="13" width="8.4" height="22" fill="#dedfd2"/><rect x="155" y="8" width="11" height="26" fill="#dccbcd"/></g>
<path d="M40 70 L70 64 H182 V102 H30Z" fill="url(#p4f)"/>
<path d="M66 72 L112 72 L122 98 L58 98Z" fill="#cfcec6"/>
<path d="M0 58 H20 V102 H0Z" fill="#d4d2cc"/>
<path d="M20.7 46 H37 C39 46 40 47 40 50 V70 H24 V60 H20.7Z" fill="#d9a520"/><rect x="24" y="60" width="18" height="12" fill="#d7a21c"/>
<path d="M26 52 L30 84 M38 54 L33 86" stroke="#e9e4d4" stroke-width="2.4"/><path d="M14 70 L44 66 M12 80 L40 76" stroke="#ddd8ca" stroke-width="2"/>
<path d="M0 60 C10 58 22 60 25 64 C24 68 10 72 0 72Z" fill="#dcd8d0"/><rect x="0" y="72" width="14" height="12" fill="#cdc7bd"/>
<rect x="0" y="84" width="46" height="18" fill="#b9b2a8"/>
<path d="M66.8 54 C66.8 51 68 50 70 50 H150 L160 56 V66 H66.8Z" fill="#3c4449"/>
<path d="M106 60 H160 C165 60 167 62 167 66 V84 C167 87 166 88 163 88 H128 L106 70Z" fill="#3a4247"/>
<path d="M112 66 L128 72 L128 88 L122 86 L110 72Z" fill="#4d6a7a"/>
<g fill="#e0c050"><path d="M71 50 h12 l1 12 h-13z"/><path d="M104 50 h10 l1 11 h-11z"/><path d="M122 53 l10 1 l-3 10 l-10 -3z"/><path d="M134 58 l14 2 l-2 8 l-14 -3z"/></g>
<g fill="#c9d3b4"><path d="M86 51 h14 v10 h-14z"/><path d="M114 51 l8 1 l-2 9 h-7z"/></g>
<path d="M131 63.7 L148.6 64 L149 87.7 L132 86Z" fill="#9c9c9c"/>
<rect x="81.7" y="63.7" width="20.8" height="4.6" fill="#c9a878"/><rect x="82.5" y="69.4" width="19" height="8" rx="1" fill="#3a3f45"/>
<path d="M84 66 c0 -5 8 -5 8 0z" fill="#5f9a4a"/>
<path d="M127 88 l-1 8 M165 88 l1 8" stroke="#ddd" stroke-width="1.2"/>
<ellipse cx="171" cy="82" rx="14" ry="4.4" fill="#cdb288"/><path d="M160 84 l3 18 M178 85 l-4 17" stroke="#333" stroke-width=".9"/>
<path d="M167 66 h8 l1.4 4 v9 c0 3 -10.8 3 -10.8 0 v-9z" fill="#62b2b2"/></svg>
<div class="a" style="left:639px;top:597.8px;width:52px;height:21.8px;background:#2d5be0;border-radius:3px 0 0 0"></div>
<span class="t" style="left:647.00px;top:604.18px;font-size:10.3px;color:#fff;transform:scaleX(0.9677);">ACTIVE</span>
<div class="a" style="left:639px;top:678.1999999999999px;width:103px;height:21.599999999999994px;background:rgba(0,0,0,.45);border-radius:0 0 0 3px"></div>
<span class="t" style="left:647.00px;top:684.57px;font-size:10.2px;font-weight:700;color:#fff;transform:scaleX(1.0408);">ON MARKET: 299</span>
<svg class="a" style="left:645px;top:638.8px;" width="18" height="18" viewBox="0 0 18 18" ><g transform="translate(9,9)"><circle r="8.4" fill="rgba(255,255,255,.72)"/><path d="M1.6 -4 L-2.4 0 L1.6 4" fill="none" stroke="rgba(80,66,54,.72)" stroke-width="2.5" stroke-linecap="round" stroke-linejoin="round"/></g></svg>
<svg class="a" style="left:797px;top:638.8px;" width="18" height="18" viewBox="0 0 18 18" ><g transform="translate(9,9)"><circle r="8.4" fill="rgba(255,255,255,.72)"/><path d="M-1.6 -4 L2.4 0 L-1.6 4" fill="none" stroke="rgba(80,66,54,.72)" stroke-width="2.5" stroke-linecap="round" stroke-linejoin="round"/></g></svg>
<span class="t" style="left:831.00px;top:606.05px;font-size:14px;font-weight:700;color:#111;letter-spacing:0.411px;transform:scaleX(1.0900);">€525,000</span>
<svg class="a" style="left:831px;top:627.1999999999999px;" width="15" height="12" viewBox="0 0 15 12" ><g fill="#1c1c1c"><path d="M0.3 11.6 L0.3 6.2 C0.3 5.4 0.6 5 1.2 4.6 L13.2 4.6 C13.8 5 14.1 5.4 14.1 6.2 L14.1 11.6 L13.1 11.6 L13.1 9.6 L1.3 9.6 L1.3 11.6 Z"/><path d="M1.2 5 L2.4 1.4 C2.6 0.9 3 0.7 3.6 0.7 L10.8 0.7 C11.4 0.7 11.8 0.9 12 1.4 L13.2 5 Z"/></g><path d="M3.2 4.2 C3.4 2.6 6.6 2.6 6.9 4.2 M7.5 4.2 C7.8 2.6 11 2.6 11.2 4.2" stroke="#777" stroke-width="0.7" fill="none"/><rect x="1.3" y="7.3" width="11.8" height="1.3" fill="#d8d8d8"/></svg>
<span class="t" style="left:846.10px;top:624.05px;font-size:14px;color:#111;">1</span>
<svg class="a" style="left:860.2px;top:626.0px;" width="12" height="14" viewBox="0 0 12 14" ><g fill="none" stroke="#4a4a4a" stroke-width="1.15"><path d="M10.2 13.6 L10.2 1.4 L7 1.4 C5 1.4 3.6 2.6 3 4"/></g><path d="M0.8 4.9 L7.4 3.4 L7.6 4.4 L1 5.9 Z" fill="#4a4a4a"/><g stroke="#8a8a8a" stroke-width="0.75" stroke-dasharray="1.3 0.8" fill="none"><path d="M2 6.4 L1.4 13 M3.6 6.2 L3.4 13 M5.2 5.8 L5.6 13 M6.8 5.4 L7.4 12"/></g></svg>
<span class="t" style="left:874.00px;top:624.05px;font-size:14px;color:#111;">1</span>
<svg class="a" style="left:886.5px;top:626.1999999999999px;" width="15" height="14" viewBox="0 0 15 14" ><path d="M0.6 0.4 L0.6 11.2" stroke="#555" stroke-width="0.9"/><g fill="none" stroke="#3a3a3a" stroke-width="1.15" stroke-linejoin="round"><path d="M2.8 6.2 L8.4 1 L14 6.2 M4.3 5.2 L4.3 10.6 L12.5 10.6 L12.5 5.2"/></g><rect x="7.2" y="7.6" width="2.4" height="3" fill="#2a2a2a"/><rect x="3.4" y="10.8" width="10" height="1.9" fill="#8e8e8e"/></svg>
<span class="t" style="left:902.40px;top:624.05px;font-size:14px;color:#111;letter-spacing:1.086px;transform:scaleX(1.0900);">90m<span style="font-size:10px;position:relative;top:-5.6px;letter-spacing:0">2</span></span>
<span class="t" style="left:831.00px;top:644.07px;font-size:12.2px;color:#111;transform:scaleX(1.0521);">Price / sq.m.: €5,833</span>
<span class="t" style="left:831.00px;top:663.07px;font-size:12.2px;color:#111;transform:scaleX(1.0812);">Distance: 0.554 km</span>
<span class="t" style="left:831.00px;top:680.27px;font-size:12.2px;color:#111;letter-spacing:0.097px;transform:scaleX(1.0900);">Include in PDF</span>
<div class="a" style="left:928px;top:675.0999999999999px;width:65px;height:17.4px;border:1px solid #dcdcdc;border-radius:3px;background:#f4f4f4"></div>
<div class="a" style="left:928px;top:675.0999999999999px;width:32px;height:17.4px;background:#b4b4b4;border-radius:3px"></div>
<span class="t" style="left:934.25px;top:677.34px;font-size:12px;transform:scaleX(0.9960);">Yes</span>
<span class="t" style="left:968.50px;top:677.34px;font-size:12px;color:#9a9a9a;transform:scaleX(1.0428);">No</span>
<svg class="a" style="left:978px;top:607.8px;" width="15" height="15" viewBox="0 0 15 15" ><rect width="15" height="15" rx="2" fill="#c9c9c9"/><path d="M3 7.8 L6.2 11 L12.2 4.2" fill="none" stroke="#fff" stroke-width="1.9"/></svg>
<div class="item" style="top:709.8px;height:103px"></div>
<svg class="a" style="left:639px;top:709.8px;border-radius:3px 0 0 3px" width="182" height="103" viewBox="0 0 182 103" preserveAspectRatio="none"><defs><linearGradient id="p5a" x1="0" x2="1"><stop offset="0" stop-color="#84847c"/><stop offset=".12" stop-color="#a6a79d"/><stop offset=".27" stop-color="#c6c7bb"/><stop offset=".68" stop-color="#c9cabe"/><stop offset=".86" stop-color="#9a9b91"/><stop offset="1" stop-color="#76766e"/></linearGradient></defs>
<rect width="182" height="103" fill="url(#p5a)"/>
<g transform="rotate(1 104 46)"><rect x="72" y="10.4" width="63" height="71" fill="#dfdfd6"/><rect x="75.2" y="13.6" width="56.6" height="64.6" fill="#c8c9bd"/><rect x="78" y="16.4" width="51" height="50" fill="#ecece8"/></g>
<g transform="rotate(-8.9 83 54)"><rect x="50" y="20" width="63" height="69" fill="#e0e0d8"/><rect x="53.2" y="23.2" width="56.6" height="62.6" fill="#c4c5b9"/><rect x="55.6" y="25.6" width="51.8" height="48.4" fill="#f1f1ef"/></g></svg>
<div class="a" style="left:639px;top:709.8px;width:52px;height:21.8px;background:#2d5be0;border-radius:3px 0 0 0"></div>
<span class="t" style="left:647.00px;top:716.18px;font-size:10.3px;color:#fff;transform:scaleX(0.9677);">ACTIVE</span>
<div class="a" style="left:639px;top:790.1999999999999px;width:97px;height:22.599999999999994px;background:rgba(0,0,0,.45);border-radius:0 0 0 3px"></div>
<span class="t" style="left:647.00px;top:796.57px;font-size:10.2px;font-weight:700;color:#fff;transform:scaleX(1.0394);">ON MARKET: 50</span>
<svg class="a" style="left:645px;top:750.8px;" width="18" height="18" viewBox="0 0 18 18" ><g transform="translate(9,9)"><circle r="8.4" fill="rgba(255,255,255,.72)"/><path d="M1.6 -4 L-2.4 0 L1.6 4" fill="none" stroke="rgba(80,66,54,.72)" stroke-width="2.5" stroke-linecap="round" stroke-linejoin="round"/></g></svg>
<svg class="a" style="left:797px;top:750.8px;" width="18" height="18" viewBox="0 0 18 18" ><g transform="translate(9,9)"><circle r="8.4" fill="rgba(255,255,255,.72)"/><path d="M-1.6 -4 L2.4 0 L-1.6 4" fill="none" stroke="rgba(80,66,54,.72)" stroke-width="2.5" stroke-linecap="round" stroke-linejoin="round"/></g></svg>
<span class="t" style="left:831.00px;top:718.05px;font-size:14px;font-weight:700;color:#111;transform:scaleX(1.0273);">€515,000</span>
<svg class="a" style="left:831px;top:739.1999999999999px;" width="15" height="12" viewBox="0 0 15 12" ><g fill="#1c1c1c"><path d="M0.3 11.6 L0.3 6.2 C0.3 5.4 0.6 5 1.2 4.6 L13.2 4.6 C13.8 5 14.1 5.4 14.1 6.2 L14.1 11.6 L13.1 11.6 L13.1 9.6 L1.3 9.6 L1.3 11.6 Z"/><path d="M1.2 5 L2.4 1.4 C2.6 0.9 3 0.7 3.6 0.7 L10.8 0.7 C11.4 0.7 11.8 0.9 12 1.4 L13.2 5 Z"/></g><path d="M3.2 4.2 C3.4 2.6 6.6 2.6 6.9 4.2 M7.5 4.2 C7.8 2.6 11 2.6 11.2 4.2" stroke="#777" stroke-width="0.7" fill="none"/><rect x="1.3" y="7.3" width="11.8" height="1.3" fill="#d8d8d8"/></svg>
<span class="t" style="left:844.90px;top:736.05px;font-size:14px;color:#111;">1</span>
<svg class="a" style="left:860px;top:738.0px;" width="12" height="14" viewBox="0 0 12 14" ><g fill="none" stroke="#4a4a4a" stroke-width="1.15"><path d="M10.2 13.6 L10.2 1.4 L7 1.4 C5 1.4 3.6 2.6 3 4"/></g><path d="M0.8 4.9 L7.4 3.4 L7.6 4.4 L1 5.9 Z" fill="#4a4a4a"/><g stroke="#8a8a8a" stroke-width="0.75" stroke-dasharray="1.3 0.8" fill="none"><path d="M2 6.4 L1.4 13 M3.6 6.2 L3.4 13 M5.2 5.8 L5.6 13 M6.8 5.4 L7.4 12"/></g></svg>
<span class="t" style="left:873.50px;top:736.05px;font-size:14px;color:#111;">1</span>
<svg class="a" style="left:886.8px;top:738.1999999999999px;" width="15" height="14" viewBox="0 0 15 14" ><path d="M0.6 0.4 L0.6 11.2" stroke="#555" stroke-width="0.9"/><g fill="none" stroke="#3a3a3a" stroke-width="1.15" stroke-linejoin="round"><path d="M2.8 6.2 L8.4 1 L14 6.2 M4.3 5.2 L4.3 10.6 L12.5 10.6 L12.5 5.2"/></g><rect x="7.2" y="7.6" width="2.4" height="3" fill="#2a2a2a"/><rect x="3.4" y="10.8" width="10" height="1.9" fill="#8e8e8e"/></svg>
<span class="t" style="left:902.70px;top:736.05px;font-size:14px;color:#111;letter-spacing:0.104px;transform:scaleX(1.0900);">100m<span style="font-size:10px;position:relative;top:-5.6px;letter-spacing:0">2</span></span>
<span class="t" style="left:831.00px;top:756.07px;font-size:12.2px;color:#111;transform:scaleX(1.0288);">Price / sq.m.: €5,150</span>
<span class="t" style="left:831.00px;top:775.07px;font-size:12.2px;color:#111;transform:scaleX(1.0563);">Distance: 0.051 km</span>
<span class="t" style="left:831.00px;top:792.27px;font-size:12.2px;color:#111;letter-spacing:0.097px;transform:scaleX(1.0900);">Include in PDF</span>
<div class="a" style="left:928px;top:787.0999999999999px;width:65px;height:17.4px;border:1px solid #dcdcdc;border-radius:3px;background:#f4f4f4"></div>
<div class="a" style="left:928px;top:787.0999999999999px;width:32px;height:17.4px;background:#b4b4b4;border-radius:3px"></div>
<span class="t" style="left:934.25px;top:789.34px;font-size:12px;transform:scaleX(0.9960);">Yes</span>
<span class="t" style="left:968.50px;top:789.34px;font-size:12px;color:#9a9a9a;transform:scaleX(1.0428);">No</span>
<svg class="a" style="left:978px;top:719.8px;" width="15" height="15" viewBox="0 0 15 15" ><rect width="15" height="15" rx="2" fill="#c9c9c9"/><path d="M3 7.8 L6.2 11 L12.2 4.2" fill="none" stroke="#fff" stroke-width="1.9"/></svg>
<div class="item" style="top:823px;height:102px"></div>
<svg class="a" style="left:639px;top:823px;border-radius:3px 0 0 3px" width="182" height="102" viewBox="0 0 182 102" preserveAspectRatio="none"><defs><linearGradient id="p6a" x1="0" x2="1"><stop offset="0" stop-color="#a39b96"/><stop offset=".2" stop-color="#bbb4ae"/><stop offset=".42" stop-color="#ddd7ce"/><stop offset=".62" stop-color="#e0dad0"/><stop offset=".85" stop-color="#c6beb7"/><stop offset="1" stop-color="#9f9691"/></linearGradient></defs>
<rect width="182" height="102" fill="url(#p6a)"/>
<rect x="0" y="24" width="62" height="102" fill="#aaa39d" opacity=".45"/>
<ellipse cx="104" cy="6" rx="7" ry="10" fill="#ead8c6"/>
<rect x="107" y="18" width="16" height="102" fill="#efeae4"/><rect x="109.5" y="23.5" width="12" height="102" fill="#e6c595"/><rect x="111" y="30" width="6" height="102" fill="#f0d8b0"/>
<path d="M110 47 c1 -6 5 -10 8 -7 c2 -4 7 -3 8 1 c3 0 3 4 2 6z" fill="#41603a"/>
<rect x="124" y="10" width="1.6" height="102" fill="#cfc8c0"/></svg>
<div class="a" style="left:639px;top:823px;width:99px;height:21.8px;background:#000;border-radius:3px 0 0 0"></div>
<span class="t" style="left:647.00px;top:829.38px;font-size:10.3px;color:#fff;transform:scaleX(0.9789);">SOLD: 20.07.2021</span>
<svg class="a" style="left:645px;top:864px;" width="18" height="18" viewBox="0 0 18 18" ><g transform="translate(9,9)"><circle r="8.4" fill="rgba(255,255,255,.72)"/><path d="M1.6 -4 L-2.4 0 L1.6 4" fill="none" stroke="rgba(80,66,54,.72)" stroke-width="2.5" stroke-linecap="round" stroke-linejoin="round"/></g></svg>
<svg class="a" style="left:797px;top:864px;" width="18" height="18" viewBox="0 0 18 18" ><g transform="translate(9,9)"><circle r="8.4" fill="rgba(255,255,255,.72)"/><path d="M-1.6 -4 L2.4 0 L-1.6 4" fill="none" stroke="rgba(80,66,54,.72)" stroke-width="2.5" stroke-linecap="round" stroke-linejoin="round"/></g></svg>
<span class="t" style="left:831.00px;top:831.25px;font-size:14px;font-weight:700;color:#111;letter-spacing:0.411px;transform:scaleX(1.0900);">€505,000</span>
<svg class="a" style="left:831px;top:852.4px;" width="15" height="12" viewBox="0 0 15 12" ><g fill="#1c1c1c"><path d="M0.3 11.6 L0.3 6.2 C0.3 5.4 0.6 5 1.2 4.6 L13.2 4.6 C13.8 5 14.1 5.4 14.1 6.2 L14.1 11.6 L13.1 11.6 L13.1 9.6 L1.3 9.6 L1.3 11.6 Z"/><path d="M1.2 5 L2.4 1.4 C2.6 0.9 3 0.7 3.6 0.7 L10.8 0.7 C11.4 0.7 11.8 0.9 12 1.4 L13.2 5 Z"/></g><path d="M3.2 4.2 C3.4 2.6 6.6 2.6 6.9 4.2 M7.5 4.2 C7.8 2.6 11 2.6 11.2 4.2" stroke="#777" stroke-width="0.7" fill="none"/><rect x="1.3" y="7.3" width="11.8" height="1.3" fill="#d8d8d8"/></svg>
<span class="t" style="left:846.30px;top:849.25px;font-size:14px;color:#111;">2</span>
<svg class="a" style="left:863.5px;top:851.2px;" width="12" height="14" viewBox="0 0 12 14" ><g fill="none" stroke="#4a4a4a" stroke-width="1.15"><path d="M10.2 13.6 L10.2 1.4 L7 1.4 C5 1.4 3.6 2.6 3 4"/></g><path d="M0.8 4.9 L7.4 3.4 L7.6 4.4 L1 5.9 Z" fill="#4a4a4a"/><g stroke="#8a8a8a" stroke-width="0.75" stroke-dasharray="1.3 0.8" fill="none"><path d="M2 6.4 L1.4 13 M3.6 6.2 L3.4 13 M5.2 5.8 L5.6 13 M6.8 5.4 L7.4 12"/></g></svg>
<span class="t" style="left:877.10px;top:849.25px;font-size:14px;color:#111;">3</span>
<svg class="a" style="left:893.2px;top:851.4px;" width="15" height="14" viewBox="0 0 15 14" ><path d="M0.6 0.4 L0.6 11.2" stroke="#555" stroke-width="0.9"/><g fill="none" stroke="#3a3a3a" stroke-width="1.15" stroke-linejoin="round"><path d="M2.8 6.2 L8.4 1 L14 6.2 M4.3 5.2 L4.3 10.6 L12.5 10.6 L12.5 5.2"/></g><rect x="7.2" y="7.6" width="2.4" height="3" fill="#2a2a2a"/><rect x="3.4" y="10.8" width="10" height="1.9" fill="#8e8e8e"/></svg>
<span class="t" style="left:908.30px;top:849.25px;font-size:14px;color:#111;transform:scaleX(1.0716);">120m<span style="font-size:10px;position:relative;top:-5.6px;letter-spacing:0">2</span></span>
<span class="t" style="left:831.00px;top:869.27px;font-size:12.2px;color:#111;transform:scaleX(1.0556);">Price / sq.m.: €4,208</span>
<span class="t" style="left:831.00px;top:888.27px;font-size:12.2px;color:#111;transform:scaleX(1.0735);">Distance: 0.230 km</span>
<span class="t" style="left:831.00px;top:905.47px;font-size:12.2px;color:#111;letter-spacing:0.097px;transform:scaleX(1.0900);">Include in PDF</span>
<div class="a" style="left:928px;top:900.3px;width:65px;height:17.4px;border:1px solid #dcdcdc;border-radius:3px;background:#f4f4f4"></div>
<div class="a" style="left:928px;top:900.3px;width:32px;height:17.4px;background:#b4b4b4;border-radius:3px"></div>
<span class="t" style="left:934.25px;top:902.54px;font-size:12px;transform:scaleX(0.9960);">Yes</span>
<span class="t" style="left:968.50px;top:902.54px;font-size:12px;color:#9a9a9a;transform:scaleX(1.0428);">No</span>
<svg class="a" style="left:978px;top:833px;" width="15" height="15" viewBox="0 0 15 15" ><rect width="15" height="15" rx="2" fill="#c9c9c9"/><path d="M3 7.8 L6.2 11 L12.2 4.2" fill="none" stroke="#fff" stroke-width="1.9"/></svg>
</div></div>
<div class="a" style="left:1014.6px;top:265px;width:5.6px;height:594px;background:#e2e2e2;border-radius:3px"></div>
<div class="a" style="left:1014.6px;top:266px;width:5.6px;height:107px;background:#8c8c8c;border-radius:3px"></div>
<div class="a" style="left:639px;top:877px;width:334px;height:39.8px;background:#ebebeb"></div>
<div class="a" style="left:973px;top:877px;width:40px;height:39.8px;background:#2d5be0"></div>
<svg class="a" style="left:985px;top:889px;" width="16" height="16" viewBox="0 0 16 16" ><path d="M8 1.2 V14.8 M1.2 8 H14.8" stroke="#fff" stroke-width="1.5"/></svg>
<span class="t" style="left:650.00px;top:890.10px;font-size:14.3px;color:#757575;letter-spacing:0.069px;transform:scaleX(1.0900);">Add comparable by Ref/ID</span>
<div class="a" style="left:639px;top:927px;width:374px;height:40px;background:#2d5be0;border-radius:2px"></div>
<span class="t" style="left:791.50px;top:940.03px;font-size:14.5px;color:#fff;transform:scaleX(0.9955);">Save CMA</span><svg class="a" style="left:1029px;top:112px" width="511" height="859" viewBox="1029 112 511 859">
<rect x="1029" y="112" width="511" height="859" fill="#f1f1f1"/>
<g fill="#d2ebce"><polygon points="1038.0,112.0 1044.0,112.0 1043.0,119.0 1039.0,118.0"/><polygon points="1029.0,150.0 1036.0,147.0 1040.0,150.0 1040.0,210.0 1066.0,212.0 1066.0,231.0 1046.0,236.0 1029.0,250.0"/><polygon points="1029.0,277.0 1124.0,417.0 1111.0,448.0 1096.0,452.0 1029.0,470.0"/><polygon points="1074.0,488.0 1086.0,486.0 1088.0,500.0 1080.0,514.0 1074.0,508.0"/><polygon points="1031.0,528.0 1046.0,528.0 1044.0,548.0 1033.0,546.0"/><polygon points="1045.0,552.0 1057.0,552.0 1055.0,566.0 1046.0,564.0"/><polygon points="1092.8,612.0 1121.0,612.0 1165.5,619.5 1159.5,628.4 1172.9,637.3 1150.6,646.2 1150.6,664.0 1112.0,655.0 1109.0,637.3 1091.3,631.4"/><polygon points="1192.0,646.0 1206.0,642.0 1209.0,655.0 1198.0,660.0"/><polygon points="1248.5,196.5 1262.0,194.0 1264.8,221.8 1254.0,222.0"/><polygon points="1227.8,160.5 1257.4,156.5 1257.4,160.4 1228.8,165.4"/><polygon points="1170.0,290.0 1174.4,306.3 1165.5,305.0"/><polygon points="1210.5,318.7 1218.0,316.7 1220.3,326.6 1213.0,328.6"/><polygon points="1129.9,214.3 1141.7,226.2 1129.9,226.2"/><polygon points="1263.0,118.0 1269.0,117.0 1270.0,124.0 1264.0,125.0"/><polygon points="1267.0,128.0 1273.0,127.0 1274.0,133.0 1268.0,134.0"/><polygon points="1305.8,158.0 1317.6,158.0 1317.6,174.3 1305.8,174.3"/><polygon points="1374.0,180.2 1412.5,177.2 1412.5,185.0 1374.0,187.6"/><polygon points="1342.8,192.0 1351.7,192.0 1351.7,205.4 1342.8,205.4"/><polygon points="1309.3,202.4 1320.6,202.4 1320.6,220.2 1312.0,220.2 1309.3,214.0"/><polygon points="1381.4,204.0 1387.3,204.0 1387.3,212.8 1381.4,212.8"/><polygon points="1403.6,113.5 1418.4,113.5 1418.4,123.9 1403.6,123.9"/><polygon points="1338.4,112.0 1351.7,112.0 1349.0,122.4 1341.0,122.4"/><polygon points="1285.0,283.4 1291.5,283.4 1292.0,297.3 1285.0,297.3"/><polygon points="1347.9,321.0 1357.6,321.0 1357.6,337.3 1347.9,337.3"/><polygon points="1492.5,166.8 1500.0,166.8 1500.0,181.7 1492.5,181.7"/><polygon points="1283.0,284.0 1290.0,284.0 1292.0,296.0 1285.0,296.0"/><polygon points="1310.0,444.5 1325.0,446.0 1323.0,466.7 1310.0,465.0"/><polygon points="1316.0,420.0 1326.0,421.0 1325.0,430.0 1316.0,429.0"/><polygon points="1454.0,440.0 1464.0,417.8 1469.0,419.0 1466.0,432.0 1477.7,452.0 1470.0,466.7 1458.0,458.0"/><polygon points="1494.0,451.0 1505.0,449.0 1506.0,456.0 1495.0,457.8"/><polygon points="1437.7,577.9 1443.0,564.5 1446.6,566.0 1441.0,578.0"/><polygon points="1291.0,540.0 1300.0,527.5 1311.0,532.0 1311.7,560.0 1306.0,589.7 1296.0,585.0 1294.0,560.0"/><polygon points="1439.0,650.0 1467.0,646.0 1462.0,688.0 1455.0,700.0 1441.0,668.0"/><polygon points="1417.0,636.0 1430.0,632.0 1432.0,640.0 1420.0,644.0"/><polygon points="1435.0,616.0 1443.0,613.0 1445.0,622.0 1437.0,625.0"/><polygon points="1334.0,590.0 1343.0,585.3 1345.8,594.0 1338.0,598.6"/><polygon points="1266.0,598.0 1285.0,595.8 1290.0,610.0 1287.0,640.0 1272.0,646.0 1268.0,620.0"/><polygon points="1212.0,708.0 1224.0,704.0 1228.0,728.0 1222.0,736.0 1215.0,724.0"/><polygon points="1304.0,700.0 1312.0,696.0 1315.0,706.0 1307.0,710.0"/><polygon points="1253.0,470.0 1258.0,470.0 1258.0,477.0 1253.0,477.0"/><polygon points="1229.0,528.0 1235.0,527.0 1236.0,535.0 1230.0,536.0"/><polygon points="1261.0,515.0 1268.0,513.0 1272.0,524.0 1266.0,527.0"/><polygon points="1140.0,460.0 1148.0,460.0 1146.0,467.0 1140.0,467.0"/><polygon points="1073.0,718.0 1084.0,714.0 1086.0,722.0 1076.0,726.0"/><polygon points="1034.0,742.0 1042.0,740.0 1046.0,760.0 1035.0,764.0"/><polygon points="1133.0,740.0 1150.0,738.0 1150.0,752.0 1136.0,752.0"/><polygon points="1114.0,756.0 1134.0,753.0 1134.0,758.0 1115.0,761.0"/><polygon points="1175.0,757.0 1181.0,756.0 1181.0,772.0 1175.0,772.0"/><polygon points="1124.0,782.0 1135.0,780.0 1136.0,788.0 1126.0,791.0"/><polygon points="1136.0,790.0 1142.0,790.0 1141.0,800.0 1136.0,800.0"/><polygon points="1147.0,850.0 1158.0,851.0 1162.0,858.0 1156.0,861.0"/><polygon points="1233.0,848.0 1238.0,848.0 1238.0,855.0 1233.0,855.0"/><polygon points="1166.0,906.0 1180.0,906.0 1180.0,924.0 1166.0,924.0"/><polygon points="1029.0,908.0 1033.0,908.0 1033.0,922.0 1029.0,922.0"/><polygon points="1120.0,683.0 1150.0,683.0 1146.0,700.0 1135.0,706.0 1122.0,694.0"/><polygon points="1399.6,888.0 1413.0,888.0 1413.0,901.0 1399.6,901.0"/><polygon points="1433.0,874.0 1458.0,874.0 1450.0,886.0 1438.0,886.0"/><polygon points="1425.0,733.0 1450.0,730.0 1462.0,738.0 1464.0,752.0 1456.0,752.0 1450.0,742.0 1428.0,742.0"/><polygon points="1497.0,705.0 1503.0,705.0 1503.0,714.0 1497.0,714.0"/><polygon points="1512.0,706.0 1530.0,700.0 1532.0,712.0 1514.0,718.0"/><polygon points="1447.0,800.0 1455.0,798.0 1456.0,805.0 1448.0,806.0"/><polygon points="1483.0,795.0 1492.0,792.0 1486.0,815.0 1482.0,812.0"/><polygon points="1499.0,742.0 1506.0,742.0 1504.0,750.0 1499.0,750.0"/><polygon points="1536.0,790.0 1540.0,790.0 1540.0,810.0 1536.0,810.0"/><polygon points="1536.0,700.0 1540.0,700.0 1540.0,716.0 1536.0,716.0"/></g>
<g fill="#c9d7f7"><polygon points="1029.0,969.5 1060.0,962.7 1091.0,954.2 1122.0,948.3 1131.0,947.5 1134.0,952.0 1138.0,950.0 1149.0,959.6 1165.0,965.0 1183.0,971.0 1029.0,971.0"/><polygon points="1262.0,971.0 1268.0,952.0 1285.0,946.0 1328.0,934.5 1327.0,921.0 1339.0,917.0 1342.0,931.0 1395.0,917.0 1400.0,936.0 1440.0,925.0 1448.0,913.0 1475.0,901.0 1505.0,876.0 1512.0,890.0 1540.0,871.0 1540.0,971.0"/><rect x="1479" y="170.7" width="7.6" height="7" rx="2"/><rect x="1029" y="162" width="7" height="6"/><path d="M1029 182 l10 -2 l2 12 l-12 6z"/><ellipse cx="1149" cy="629" rx="2" ry="3"/><rect x="1050" y="342" width="5" height="4" transform="rotate(30 1052 344)"/><rect x="1133" y="333" width="5" height="3"/><rect x="1537" y="738" width="3" height="4"/></g>
<g fill="none" stroke="#fff" stroke-linecap="round" stroke-linejoin="round"><polyline points="1041.4,341.6 1103.2,443.0" stroke="#e7e7e7" stroke-width="3.2"/><polyline points="1029.0,363.9 1088.4,450.4" stroke="#e7e7e7" stroke-width="3.2"/><polyline points="1042.6,297.0 1056.2,315.6" stroke="#e7e7e7" stroke-width="2.6"/><polyline points="1029.0,331.7 1066.0,307.0" stroke-width="3"/><polyline points="1032.0,282.0 1124.0,420.0 1114.0,446.0" stroke-width="2.16"/><polyline points="1029.0,150.0 1040.0,135.0 1062.0,118.0 1075.0,112.0" stroke-width="3.2"/><polyline points="1180.3,112.0 1193.0,190.0 1207.0,266.0" stroke-width="8"/><polyline points="1207.0,266.0 1175.0,335.0 1143.0,400.0 1116.0,456.0" stroke-width="7.5"/><polyline points="1207.0,266.0 1245.0,290.0 1285.0,317.0 1296.0,325.0" stroke-width="5"/><polyline points="1029.0,240.0 1060.0,280.0 1139.0,400.0 1120.0,452.0" stroke-width="8"/><polyline points="1029.0,251.0 1046.0,240.0 1067.6,232.0 1130.0,229.0 1285.0,226.0 1366.0,208.0" stroke-width="3.6"/><polyline points="1422.9,112.0 1412.5,262.0 1403.6,400.0 1390.0,545.0 1377.0,688.0 1370.0,760.0" stroke-width="7.6"/><polyline points="1357.6,112.0 1364.0,160.0 1365.0,186.0 1360.0,230.0 1359.0,242.0" stroke-width="4.2"/><polyline points="1369.5,172.8 1540.0,163.9" stroke-width="3.6"/><polyline points="1371.0,193.5 1540.0,181.7" stroke-width="3.6"/><polyline points="1285.0,224.7 1320.0,232.0 1359.0,242.4 1412.5,261.7 1470.0,284.0 1540.0,310.6" stroke-width="3.8"/><polyline points="1285.0,313.6 1350.0,318.0 1406.6,324.0" stroke-width="3"/><polyline points="1254.5,112.0 1262.0,170.0 1274.0,260.0 1283.4,312.7 1290.0,340.0" stroke-width="3.6"/><polyline points="1275.0,112.0 1283.0,170.0 1292.0,225.0" stroke-width="3"/><polyline points="1113.0,476.0 1150.0,530.0 1200.0,606.0 1254.5,688.0 1262.0,700.0" stroke-width="10.5" stroke-opacity=".42"/><polyline points="1116.9,473.4 1153.9,527.4 1203.9,603.4 1258.4,685.4 1265.9,697.4" stroke-width="3.24"/><polyline points="1109.1,478.6 1146.1,532.6 1196.1,608.6 1250.6,690.6 1258.1,702.6" stroke-width="3.24"/><circle cx="1109" cy="469.7" r="10.5" fill="none" stroke-width="4"/><polyline points="1029.0,480.0 1060.0,474.0 1100.0,462.0" stroke-width="3"/><polyline points="1029.0,590.0 1100.0,545.0 1150.0,512.0 1200.0,488.0 1217.0,470.0 1226.0,440.0 1260.0,416.0 1330.0,412.0 1360.0,420.0" stroke-width="3.2"/><polyline points="1280.0,400.0 1296.0,470.0 1314.0,520.0 1322.0,560.0 1330.0,600.0 1352.0,640.0 1372.0,688.0" stroke-width="3"/><polyline points="1363.0,440.0 1412.0,444.0 1450.0,500.0 1480.0,540.0 1500.0,560.0 1535.0,570.0" stroke-width="3"/><polyline points="1420.0,400.0 1440.0,470.0 1458.0,520.0 1455.0,560.0 1420.0,610.0 1412.0,650.0 1440.0,690.0 1470.0,720.0" stroke-width="3.24"/><polyline points="1200.0,560.0 1240.0,575.0 1290.0,590.0 1330.0,600.0" stroke-width="3.51"/><polyline points="1100.0,610.0 1160.0,604.0 1210.0,608.0 1230.0,628.0" stroke-width="3.24"/><polyline points="1104.6,112.0 1104.6,229.0" stroke-width="3.51"/><polyline points="1143.2,112.0 1143.2,229.0" stroke-width="3.51"/><polyline points="1160.0,112.0 1170.0,229.0" stroke-width="3.51"/><polyline points="1218.9,112.0 1222.0,229.0" stroke-width="3.51"/><polyline points="1236.7,112.0 1243.0,229.0" stroke-width="3.51"/><polyline points="1126.9,128.0 1285.0,122.0" stroke-width="3.51"/><polyline points="1126.9,142.5 1285.0,135.0" stroke-width="3.51"/><polyline points="1126.9,160.5 1285.0,152.5" stroke-width="3.51"/><polyline points="1126.9,176.8 1285.0,168.5" stroke-width="3.51"/><polyline points="1126.9,193.0 1285.0,186.0" stroke-width="3.51"/><polyline points="1126.9,210.9 1285.0,205.0" stroke-width="3.51"/><polyline points="1126.9,128.0 1126.9,229.0" stroke-width="2.97"/><polyline points="1067.0,212.0 1067.0,232.0" stroke-width="3.51"/><polyline points="1040.0,212.0 1127.0,212.0" stroke-width="3.51"/><polyline points="1441.0,112.0 1437.0,163.0" stroke-width="2.7"/><polyline points="1459.0,112.0 1455.0,163.0" stroke-width="2.7"/><polyline points="1474.0,112.0 1470.0,163.0" stroke-width="2.7"/><polyline points="1491.0,112.0 1487.0,163.0" stroke-width="2.7"/><polyline points="1504.0,112.0 1500.0,163.0" stroke-width="2.7"/><polyline points="1520.0,112.0 1516.0,163.0" stroke-width="2.7"/><polyline points="1424.0,126.0 1540.0,120.0" stroke-width="2.7"/><polyline points="1424.0,139.0 1540.0,133.0" stroke-width="2.7"/><polyline points="1424.0,152.0 1540.0,146.0" stroke-width="2.7"/><polyline points="1437.0,192.0 1433.0,300.0" stroke-width="2.7"/><polyline points="1452.0,192.0 1448.0,300.0" stroke-width="2.7"/><polyline points="1468.0,192.0 1464.0,300.0" stroke-width="2.7"/><polyline points="1484.0,192.0 1480.0,300.0" stroke-width="2.7"/><polyline points="1424.0,228.0 1480.0,224.0" stroke-width="2.7"/><polyline points="1424.0,250.0 1470.0,250.0" stroke-width="2.7"/><circle cx="1440.6" cy="224.7" r="8.6" fill="none" stroke-width="2"/><polyline points="1510.0,230.0 1504.0,300.0" stroke-width="2.7"/><polyline points="1524.0,230.0 1518.0,300.0" stroke-width="2.7"/><polyline points="1536.0,230.0 1530.0,300.0" stroke-width="2.7"/><polyline points="1500.0,230.0 1540.0,228.0" stroke-width="2.7"/><polyline points="1496.0,262.0 1540.0,262.0" stroke-width="2.7"/><polyline points="1286.0,124.0 1290.0,150.0" stroke-width="2.16"/><polyline points="1290.5,122.8 1294.5,148.8" stroke-width="2.16"/><polyline points="1295.0,121.6 1299.0,147.6" stroke-width="2.16"/><polyline points="1299.5,120.4 1303.5,146.4" stroke-width="2.16"/><polyline points="1304.0,119.2 1308.0,145.2" stroke-width="2.16"/><polyline points="1285.0,128.0 1318.0,118.0" stroke-width="2.16"/><polyline points="1286.0,140.0 1320.0,130.0" stroke-width="2.16"/><polyline points="1285.0,152.0 1318.0,146.0" stroke-width="3"/><polyline points="1285.0,250.0 1300.0,262.0 1330.0,285.0 1350.0,318.0" stroke-width="2.7"/><polyline points="1300.0,262.0 1290.0,300.0" stroke-width="2.7"/><polyline points="1330.0,240.0 1318.0,290.0 1312.0,316.0" stroke-width="2.7"/><polyline points="1359.0,242.0 1345.0,300.0" stroke-width="2.7"/><polyline points="1390.0,250.0 1384.0,320.0" stroke-width="2.7"/><polyline points="1372.0,246.0 1368.0,320.0" stroke-width="2.7"/><polyline points="1290.0,266.0 1340.0,272.0" stroke-width="2.7"/><polyline points="1291.0,300.0 1400.0,306.0" stroke-width="2.7"/><polyline points="1425.0,262.0 1420.0,330.0" stroke-width="2.7"/><polyline points="1450.0,275.0 1425.0,340.0 1415.0,370.0" stroke-width="2.7"/><polyline points="1470.0,284.0 1445.0,350.0 1432.0,400.0" stroke-width="2.7"/><polyline points="1470.0,284.0 1480.0,330.0 1478.0,380.0" stroke-width="2.7"/><polyline points="1500.0,295.0 1498.0,340.0" stroke-width="2.7"/><polyline points="1440.0,318.0 1520.0,330.0 1540.0,345.0" stroke-width="2.7"/><polyline points="1455.0,350.0 1500.0,372.0 1520.0,400.0" stroke-width="2.7"/><polyline points="1505.0,340.0 1530.0,350.0" stroke-width="2.7"/><polyline points="1520.0,380.0 1540.0,376.0" stroke-width="2.7"/><polyline points="1191.3,247.6 1130.2,378.0" stroke-width="3.24"/><polyline points="1171.4,238.3 1112.8,363.2" stroke-width="3.24"/><polyline points="1151.5,228.9 1095.5,348.4" stroke-width="3.24"/><polyline points="1131.6,219.6 1078.1,333.7" stroke-width="3.24"/><polyline points="1197.7,285.9 1110.7,245.2" stroke-width="3.24"/><polyline points="1188.3,305.8 1105.0,266.8" stroke-width="3.24"/><polyline points="1179.0,325.8 1099.3,288.4" stroke-width="3.24"/><polyline points="1169.6,345.7 1093.6,310.0" stroke-width="3.24"/><polyline points="1160.3,365.6 1087.9,331.6" stroke-width="3.24"/><polyline points="1151.0,385.5 1082.2,353.3" stroke-width="3.24"/><polyline points="1196.8,287.7 1219.4,298.3" stroke-width="2.97"/><polyline points="1186.6,309.5 1217.4,323.9" stroke-width="2.97"/><polyline points="1176.4,331.2 1215.4,349.4" stroke-width="2.97"/><polyline points="1166.2,352.9 1213.3,375.0" stroke-width="2.97"/><polyline points="1156.1,374.6 1211.3,400.5" stroke-width="2.97"/><polyline points="1029.0,560.0 1072.0,640.0" stroke-width="2.97"/><polyline points="1045.0,551.0 1088.0,631.0" stroke-width="2.97"/><polyline points="1061.0,542.0 1104.0,622.0" stroke-width="2.97"/><polyline points="1077.0,533.0 1120.0,613.0" stroke-width="2.97"/><polyline points="1093.0,524.0 1136.0,604.0" stroke-width="2.97"/><polyline points="1109.0,515.0 1152.0,595.0" stroke-width="2.97"/><polyline points="1029.0,520.0 1100.0,476.0" stroke-width="2.97"/><polyline points="1029.0,544.0 1100.0,500.0" stroke-width="2.97"/><polyline points="1029.0,568.0 1100.0,524.0" stroke-width="2.97"/><polyline points="1029.0,592.0 1100.0,548.0" stroke-width="2.97"/><polyline points="1029.0,616.0 1100.0,572.0" stroke-width="2.97"/><polyline points="1029.0,660.0 1060.0,690.0 1100.0,740.0 1110.0,760.0" stroke-width="3.24"/><polyline points="1128.0,500.0 1150.0,532.0" stroke-width="2.7"/><polyline points="1141.0,491.0 1163.0,523.0" stroke-width="2.7"/><polyline points="1154.0,482.0 1176.0,514.0" stroke-width="2.7"/><polyline points="1167.0,473.0 1189.0,505.0" stroke-width="2.7"/><polyline points="1180.0,464.0 1202.0,496.0" stroke-width="2.7"/><polyline points="1193.0,455.0 1215.0,487.0" stroke-width="2.7"/><polyline points="1206.0,446.0 1228.0,478.0" stroke-width="2.7"/><polyline points="1150.0,560.0 1172.0,596.0" stroke-width="2.7"/><polyline points="1162.0,556.0 1184.0,592.0" stroke-width="2.7"/><polyline points="1174.0,552.0 1196.0,588.0" stroke-width="2.7"/><polyline points="1186.0,548.0 1208.0,584.0" stroke-width="2.7"/><polyline points="1198.0,544.0 1220.0,580.0" stroke-width="2.7"/><polyline points="1210.0,540.0 1232.0,576.0" stroke-width="2.7"/><polyline points="1100.0,560.0 1128.0,540.0" stroke-width="2.7"/><polyline points="1114.0,566.0 1142.0,546.0" stroke-width="2.7"/><polyline points="1128.0,572.0 1156.0,552.0" stroke-width="2.7"/><polyline points="1142.0,578.0 1170.0,558.0" stroke-width="2.7"/><polyline points="1156.0,584.0 1184.0,564.0" stroke-width="2.7"/><polyline points="1170.0,590.0 1198.0,570.0" stroke-width="2.7"/><polyline points="1218.0,560.0 1250.0,548.0" stroke-width="2.43"/><polyline points="1228.0,570.0 1259.0,558.0" stroke-width="2.43"/><polyline points="1238.0,580.0 1268.0,568.0" stroke-width="2.43"/><polyline points="1248.0,590.0 1277.0,578.0" stroke-width="2.43"/><polyline points="1258.0,600.0 1286.0,588.0" stroke-width="2.43"/><polyline points="1300.0,470.0 1296.0,520.0" stroke-width="2.43"/><polyline points="1313.0,470.0 1309.0,520.0" stroke-width="2.43"/><polyline points="1326.0,470.0 1322.0,520.0" stroke-width="2.43"/><polyline points="1339.0,470.0 1335.0,520.0" stroke-width="2.43"/><polyline points="1352.0,470.0 1348.0,520.0" stroke-width="2.43"/><polyline points="1365.0,470.0 1361.0,520.0" stroke-width="2.43"/><polyline points="1290.0,470.0 1372.0,466.0" stroke-width="2.43"/><polyline points="1290.0,487.0 1372.0,483.0" stroke-width="2.43"/><polyline points="1290.0,504.0 1372.0,500.0" stroke-width="2.43"/><polyline points="1290.0,521.0 1372.0,517.0" stroke-width="2.43"/><polyline points="1410.0,420.0 1400.0,520.0" stroke-width="2.43"/><polyline points="1425.0,423.0 1415.0,523.0" stroke-width="2.43"/><polyline points="1440.0,426.0 1430.0,526.0" stroke-width="2.43"/><polyline points="1455.0,429.0 1445.0,529.0" stroke-width="2.43"/><polyline points="1470.0,432.0 1460.0,532.0" stroke-width="2.43"/><polyline points="1485.0,435.0 1475.0,535.0" stroke-width="2.43"/><polyline points="1404.0,430.0 1500.0,436.0" stroke-width="2.43"/><polyline points="1404.0,454.0 1500.0,460.0" stroke-width="2.43"/><polyline points="1404.0,478.0 1500.0,484.0" stroke-width="2.43"/><polyline points="1404.0,502.0 1500.0,508.0" stroke-width="2.43"/><polyline points="1404.0,526.0 1500.0,532.0" stroke-width="2.43"/><polyline points="1386.0,600.0 1450.0,590.0" stroke-width="2.16"/><polyline points="1386.0,618.0 1450.0,608.0" stroke-width="2.16"/><polyline points="1386.0,636.0 1450.0,626.0" stroke-width="2.16"/><polyline points="1386.0,654.0 1450.0,644.0" stroke-width="2.16"/><polyline points="1386.0,672.0 1450.0,662.0" stroke-width="2.16"/><polyline points="1440.0,590.0 1470.0,610.0 1490.0,650.0 1480.0,690.0 1470.0,720.0" stroke-width="2.7"/><polyline points="1300.0,600.0 1290.0,650.0 1300.0,700.0 1330.0,740.0" stroke-width="2.7"/><polyline points="1330.0,640.0 1350.0,690.0 1372.0,740.0" stroke-width="2.7"/><polyline points="1225.0,630.0 1245.0,660.0 1268.0,700.0 1290.0,735.0 1300.0,762.0" stroke-width="3.24"/><polyline points="1292.0,318.0 1288.0,420.0" stroke-width="2.7"/><polyline points="1309.0,318.0 1305.0,420.0" stroke-width="2.7"/><polyline points="1346.0,318.0 1342.0,420.0" stroke-width="2.7"/><polyline points="1360.0,318.0 1356.0,420.0" stroke-width="2.7"/><polyline points="1374.0,318.0 1370.0,420.0" stroke-width="2.7"/><polyline points="1387.0,318.0 1383.0,420.0" stroke-width="2.7"/><polyline points="1285.0,337.0 1400.0,345.0" stroke-width="2.7"/><polyline points="1285.0,358.0 1330.0,358.0" stroke-width="2.7"/><polyline points="1300.0,364.0 1400.0,369.0" stroke-width="2.7"/><polyline points="1285.0,388.0 1400.0,393.0" stroke-width="2.7"/><polyline points="1196.0,400.0 1170.0,450.0" stroke-width="2.7"/><polyline points="1222.0,400.0 1190.0,470.0" stroke-width="2.7"/><polyline points="1245.0,405.0 1215.0,470.0" stroke-width="2.7"/><polyline points="1150.0,420.0 1250.0,455.0" stroke-width="2.7"/><polyline points="1160.0,440.0 1230.0,470.0" stroke-width="2.7"/><polyline points="1225.0,340.0 1290.0,390.0" stroke-width="2.7"/><polyline points="1250.0,330.0 1262.0,400.0 1280.0,400.0" stroke-width="2.7"/><polyline points="1118.0,486.0 1183.0,486.0 1189.0,453.0 1237.0,418.0 1285.0,409.0" stroke-width="3"/><polyline points="1183.0,453.0 1200.0,500.0 1236.0,578.0 1262.0,640.0" stroke-width="3.24"/><polyline points="1168.0,500.0 1215.0,474.0" stroke-width="2.43"/><polyline points="1177.0,516.0 1223.0,490.0" stroke-width="2.43"/><polyline points="1186.0,532.0 1231.0,506.0" stroke-width="2.43"/><polyline points="1195.0,548.0 1239.0,522.0" stroke-width="2.43"/><polyline points="1204.0,564.0 1247.0,538.0" stroke-width="2.43"/><polyline points="1420.0,400.0 1500.0,420.0 1534.0,470.0" stroke-width="2.7"/><polyline points="1440.0,340.0 1470.0,400.0 1500.0,470.0 1510.0,560.0 1500.0,640.0 1470.0,720.0" stroke-width="2.97"/><polyline points="1029.0,929.0 1180.0,929.0 1236.0,932.0 1262.0,925.0 1330.0,910.0 1420.0,882.0 1480.0,855.0 1540.0,818.0" stroke-width="5"/><polyline points="1029.0,902.5 1150.0,902.0 1207.0,903.0 1240.0,908.0" stroke-width="3"/><polyline points="1029.0,890.7 1060.0,880.0 1097.0,870.0 1130.0,872.0 1171.0,879.0 1210.0,890.0 1236.7,899.5 1262.0,925.0" stroke-width="3"/><polyline points="1079.0,822.0 1130.0,816.0 1180.0,818.0 1245.6,828.0 1285.0,832.0 1300.0,836.0" stroke-width="3.4"/><polyline points="1029.0,937.5 1110.0,938.0 1130.0,940.0 1150.0,946.0 1185.0,962.0 1215.0,966.0 1262.0,958.0 1285.0,944.0 1330.0,932.0 1395.0,915.0 1450.0,898.0 1500.0,870.0 1540.0,845.0" stroke-width="3.4"/><polyline points="1156.0,712.0 1162.0,818.0" stroke-width="2.43"/><polyline points="1166.0,712.0 1172.0,818.0" stroke-width="2.43"/><polyline points="1176.0,712.0 1182.0,818.0" stroke-width="2.43"/><polyline points="1186.0,712.0 1192.0,818.0" stroke-width="2.43"/><polyline points="1196.0,712.0 1202.0,818.0" stroke-width="2.43"/><polyline points="1206.0,712.0 1212.0,818.0" stroke-width="2.43"/><polyline points="1216.0,712.0 1222.0,818.0" stroke-width="2.43"/><polyline points="1226.0,712.0 1232.0,818.0" stroke-width="2.43"/><polyline points="1236.0,712.0 1242.0,818.0" stroke-width="2.43"/><polyline points="1150.0,724.0 1250.0,722.0" stroke-width="2.16"/><polyline points="1150.0,736.0 1250.0,734.0" stroke-width="2.16"/><polyline points="1150.0,748.0 1250.0,746.0" stroke-width="2.16"/><polyline points="1150.0,760.0 1250.0,758.0" stroke-width="2.16"/><polyline points="1150.0,772.0 1250.0,770.0" stroke-width="2.16"/><polyline points="1150.0,784.0 1250.0,782.0" stroke-width="2.16"/><polyline points="1150.0,796.0 1250.0,794.0" stroke-width="2.16"/><polyline points="1150.0,808.0 1250.0,806.0" stroke-width="2.16"/><polyline points="1040.0,700.0 1062.0,812.0" stroke-width="2.43"/><polyline points="1056.0,702.0 1078.0,812.0" stroke-width="2.43"/><polyline points="1072.0,704.0 1094.0,812.0" stroke-width="2.43"/><polyline points="1088.0,706.0 1110.0,812.0" stroke-width="2.43"/><polyline points="1104.0,708.0 1126.0,812.0" stroke-width="2.43"/><polyline points="1120.0,710.0 1142.0,812.0" stroke-width="2.43"/><polyline points="1136.0,712.0 1158.0,812.0" stroke-width="2.43"/><polyline points="1035.0,716.0 1150.0,706.0" stroke-width="2.43"/><polyline points="1035.0,731.0 1150.0,721.0" stroke-width="2.43"/><polyline points="1035.0,746.0 1150.0,736.0" stroke-width="2.43"/><polyline points="1035.0,761.0 1150.0,751.0" stroke-width="2.43"/><polyline points="1035.0,776.0 1150.0,766.0" stroke-width="2.43"/><polyline points="1035.0,791.0 1150.0,781.0" stroke-width="2.43"/><polyline points="1035.0,806.0 1150.0,796.0" stroke-width="2.43"/><polyline points="1075.0,828.0 1070.0,870.0" stroke-width="2.43"/><polyline points="1093.0,828.0 1088.0,870.0" stroke-width="2.43"/><polyline points="1111.0,828.0 1106.0,870.0" stroke-width="2.43"/><polyline points="1129.0,828.0 1124.0,870.0" stroke-width="2.43"/><polyline points="1147.0,828.0 1142.0,870.0" stroke-width="2.43"/><polyline points="1165.0,828.0 1160.0,870.0" stroke-width="2.43"/><polyline points="1183.0,828.0 1178.0,870.0" stroke-width="2.43"/><polyline points="1060.0,838.0 1200.0,842.0" stroke-width="2.16"/><polyline points="1060.0,849.0 1200.0,853.0" stroke-width="2.16"/><polyline points="1060.0,860.0 1200.0,864.0" stroke-width="2.16"/><polyline points="1040.0,903.0 1040.0,929.0" stroke-width="2.16"/><polyline points="1064.0,903.0 1064.0,929.0" stroke-width="2.16"/><polyline points="1088.0,903.0 1088.0,929.0" stroke-width="2.16"/><polyline points="1112.0,903.0 1112.0,929.0" stroke-width="2.16"/><polyline points="1136.0,903.0 1136.0,929.0" stroke-width="2.16"/><polyline points="1160.0,903.0 1160.0,929.0" stroke-width="2.16"/><polyline points="1184.0,903.0 1184.0,929.0" stroke-width="2.16"/><polyline points="1208.0,903.0 1208.0,929.0" stroke-width="2.16"/><polyline points="1232.0,903.0 1232.0,929.0" stroke-width="2.16"/><polyline points="1055.0,740.0 1058.0,830.0 1060.0,929.0" stroke-width="3.24"/><polyline points="1240.0,770.0 1240.0,860.0 1236.0,925.0" stroke-width="3.51"/><polyline points="1262.0,790.0 1264.0,880.0 1262.0,925.0" stroke-width="2.97"/><polyline points="1245.0,850.0 1300.0,846.0" stroke-width="2.16"/><polyline points="1245.0,864.0 1300.0,860.0" stroke-width="2.16"/><polyline points="1245.0,878.0 1300.0,874.0" stroke-width="2.16"/><polyline points="1245.0,892.0 1300.0,888.0" stroke-width="2.16"/><polyline points="1245.0,906.0 1300.0,902.0" stroke-width="2.16"/><polyline points="1285.0,800.0 1288.0,900.0" stroke-width="2.7"/><polyline points="1311.0,766.0 1347.0,880.0" stroke-width="3.51"/><polyline points="1324.0,766.0 1360.0,880.0" stroke-width="3.51"/><polyline points="1337.0,766.0 1373.0,880.0" stroke-width="3.51"/><polyline points="1350.0,766.0 1386.0,880.0" stroke-width="3.51"/><polyline points="1363.0,766.0 1399.0,880.0" stroke-width="3.51"/><polyline points="1376.0,766.0 1412.0,880.0" stroke-width="3.51"/><polyline points="1389.0,766.0 1425.0,880.0" stroke-width="3.51"/><polyline points="1318.0,790.0 1396.0,772.0" stroke-width="1.62"/><polyline points="1319.0,804.0 1400.0,786.0" stroke-width="1.62"/><polyline points="1320.0,818.0 1404.0,800.0" stroke-width="1.62"/><polyline points="1321.0,832.0 1408.0,814.0" stroke-width="1.62"/><polyline points="1322.0,846.0 1412.0,828.0" stroke-width="1.62"/><polyline points="1323.0,860.0 1416.0,842.0" stroke-width="1.62"/><polyline points="1324.0,874.0 1420.0,856.0" stroke-width="1.62"/><polyline points="1285.0,905.0 1340.0,880.0 1400.0,864.0 1432.0,870.0" stroke-width="3"/><polyline points="1300.0,880.0 1330.0,870.0 1395.0,850.0" stroke-width="2.7"/><polyline points="1400.0,760.0 1390.0,800.0 1405.0,840.0 1430.0,856.0 1480.0,840.0 1500.0,815.0 1530.0,790.0 1540.0,786.0" stroke-width="3.51"/><polyline points="1420.0,850.0 1440.0,870.0 1500.0,858.0" stroke-width="2.97"/><polyline points="1395.0,800.0 1420.0,812.0 1450.0,830.0 1465.0,846.0" stroke-width="2.7"/><polyline points="1430.0,762.0 1450.0,756.0 1454.0,790.0 1436.0,792.0 1432.0,770.0" stroke-width="2.7"/><polyline points="1436.0,792.0 1436.0,820.0 1470.0,828.0" stroke-width="2.7"/><polyline points="1474.0,700.0 1480.0,740.0 1484.0,790.0 1470.0,828.0" stroke-width="3.51"/><polyline points="1480.0,740.0 1520.0,730.0 1540.0,722.0" stroke-width="2.7"/><polyline points="1490.0,690.0 1510.0,720.0 1520.0,760.0 1510.0,800.0" stroke-width="2.7"/><polyline points="1500.0,700.0 1540.0,690.0" stroke-width="2.7"/><polyline points="1520.0,760.0 1540.0,756.0" stroke-width="2.7"/><polyline points="1384.0,800.0 1396.0,880.0" stroke-width="2.7"/><polyline points="1430.0,880.0 1434.0,905.0" stroke-width="3.24"/><polyline points="1290.0,735.0 1305.0,720.0 1330.0,705.0 1346.0,722.0 1362.0,740.0" stroke-width="3"/><polyline points="1310.0,690.0 1320.0,720.0" stroke-width="2.7"/><polyline points="1380.0,700.0 1400.0,722.0 1426.0,730.0" stroke-width="2.7"/></g>
<g font-family="Liberation Sans, sans-serif" font-size="13.6" fill="#929292" stroke="#f6f6f6" stroke-width="1.6" paint-order="stroke"><text transform="translate(1132.2 188.5) scale(1.1 1)" x="0" y="0" textLength="71.2" lengthAdjust="spacing">AVENIDAS</text><text transform="translate(1145.3 204) scale(1.1 1)" x="0" y="0" textLength="47.5" lengthAdjust="spacing">NOVAS</text><text transform="translate(1167 261.3) scale(1.1 1)" x="0" y="0" textLength="75.5" lengthAdjust="spacing">SALDANHA</text><text transform="translate(1328.9 303.2) scale(1.1 1)" x="0" y="0" textLength="70.6" lengthAdjust="spacing">ARROIOS</text><text transform="translate(1042.6 346.3) scale(1.1 1)" x="0" y="0" textLength="86.9" lengthAdjust="spacing">SEBASTIÃO</text><text transform="translate(1006 346.3) scale(1.1 1)" x="0" y="0" textLength="28.5" lengthAdjust="spacing">SÃO</text><text transform="translate(1041.4 362.7) scale(1.1 1)" x="0" y="0" textLength="79.8" lengthAdjust="spacing">PEDREIRA</text><text transform="translate(1014.5 362.7) scale(1.1 1)" x="0" y="0" textLength="20.1" lengthAdjust="spacing">DA</text><text transform="translate(1508 443.2) scale(1.1 1)" x="0" y="0" textLength="50.0" lengthAdjust="spacing">PENHA</text><text transform="translate(1517.7 459.5) scale(1.1 1)" x="0" y="0" textLength="56.6" lengthAdjust="spacing">FRANÇA</text><text transform="translate(1385.8 497.8) scale(1.1 1)" x="0" y="0" textLength="45.3" lengthAdjust="spacing">ANJOS</text><text transform="translate(1281.9 558.4) scale(1.1 1)" x="0" y="0" textLength="35.5" lengthAdjust="spacing">PENA</text><text transform="translate(1476.2 644.6) scale(1.1 1)" x="0" y="0" textLength="47.7" lengthAdjust="spacing">GRAÇA</text><text transform="translate(1102.6 681.8) scale(1.1 1)" x="0" y="0" textLength="73.8" lengthAdjust="spacing">PRÍNCIPE</text><text transform="translate(1122.4 698.4) scale(1.1 1)" x="0" y="0" textLength="38.6" lengthAdjust="spacing">REAL</text><text transform="translate(1517.7 688.3) scale(1.1 1)" x="0" y="0" textLength="29.4" lengthAdjust="spacing">SÃO</text><text x="1535.5" y="703.4">D</text><text transform="translate(1353.8 725.4) scale(1.1 1)" x="0" y="0" textLength="84.4" lengthAdjust="spacing">MOURARIA</text><text transform="translate(1194.5 775.9) scale(1.1 1)" x="0" y="0" textLength="59.4" lengthAdjust="spacing">BAIRRO</text><text transform="translate(1205.5 791.9) scale(1.1 1)" x="0" y="0" textLength="39.1" lengthAdjust="spacing">ALTO</text><text transform="translate(1460.5 791.8) scale(1.1 1)" x="0" y="0" textLength="63.6" lengthAdjust="spacing">ALFAMA</text><text transform="translate(1034.3 814.1) scale(1.1 1)" x="0" y="0" textLength="29.7" lengthAdjust="spacing">SÃO</text><text transform="translate(1026.5 830.7) scale(1.1 1)" x="0" y="0" textLength="47.5" lengthAdjust="spacing">BENTO</text><text transform="translate(1258 839.3) scale(1.1 1)" x="0" y="0" textLength="60.9" lengthAdjust="spacing">CHIADO</text><text transform="translate(1198.7 945) scale(1.1 1)" x="0" y="0" textLength="63.1" lengthAdjust="spacing">CAIS DO</text><text transform="translate(1204.6 961.8) scale(1.1 1)" x="0" y="0" textLength="52.1" lengthAdjust="spacing">SODRÉ</text></g>
<g font-family="Liberation Sans, sans-serif" fill="#6f6f6f" stroke="#f6f6f6" stroke-width="1.4" paint-order="stroke"><text x="1019.5" y="481.6" font-size="12.4" transform="rotate(-13.6 1029 481.6)">únel do Marquês</text><text x="1028" y="716" font-size="10.8" transform="rotate(68 1032 716)">Bento</text></g>
<circle cx="1314.1" cy="543.1" r="220.4" fill="rgba(45,91,224,.2)" stroke="#2d5be0" stroke-width="1.2"/>
<g fill="#0b1323"><circle cx="1363.3" cy="436.8" r="6.4"/><circle cx="1405.1" cy="476.2" r="6.4"/><circle cx="1399.1" cy="492.8" r="6.4"/><circle cx="1319.4" cy="497.8" r="6.4"/><circle cx="1163.9" cy="500.6" r="6.4"/><circle cx="1209.1" cy="532.1" r="6.4"/><circle cx="1361.5" cy="517.7" r="6.4"/><circle cx="1372.5" cy="517.7" r="6.4"/><circle cx="1372.5" cy="529.9" r="6.4"/><circle cx="1368.9" cy="551.8" r="6.4"/><circle cx="1383.4" cy="551.8" r="6.4"/><circle cx="1314.6" cy="540.8" r="6.4"/><circle cx="1325" cy="561.9" r="6.4"/><circle cx="1320.6" cy="569.6" r="6.4"/><circle cx="1267.5" cy="600.4" r="6.4"/><circle cx="1204.2" cy="608.1" r="6.4"/><circle cx="1227.8" cy="630.5" r="6.4"/><circle cx="1413.5" cy="649.9" r="6.4"/><circle cx="1214.9" cy="689" r="6.4"/><circle cx="1192.6" cy="519.9" r="13.6"/><circle cx="1413.1" cy="497.8" r="13.6"/><circle cx="1311.7" cy="554.2" r="13.6"/></g>
<g font-family="Liberation Sans, sans-serif" font-size="12.5" fill="#e6e8ee" text-anchor="middle"><text x="1192.4" y="524.3">3</text><text x="1413" y="502.2">2</text><text x="1311.6" y="558.7">5</text></g>
<path d="M1314 543 C1311 531 1303 524 1303 515.6 A11 11 0 1 1 1325 515.6 C1325 524 1317 531 1314 543Z" fill="#2d5be0"/><circle cx="1314" cy="515.4" r="5.6" fill="#a9b0c2"/>
</svg>
<div class="a" style="left:1039.4px;top:122px;width:89.1px;height:89.7px;background:#fff;border-radius:5px;box-shadow:0 0 8px rgba(0,0,0,.16)"></div>
<svg class="a" style="left:1041px;top:123.8px;border-radius:3px" width="86" height="86.2" viewBox="0 0 86 86"><defs><linearGradient id="sat1" x1="0" y1="0" x2="0" y2="1"><stop offset="0" stop-color="#447478"/><stop offset="1" stop-color="#315c68"/></linearGradient><pattern id="satn" width="7" height="7" patternUnits="userSpaceOnUse"><rect width="7" height="7" fill="none"/><rect x="1" y="1" width="2.4" height="2" fill="#a8624e" opacity=".55"/><rect x="4" y="4" width="2" height="2.4" fill="#4e6a48" opacity=".55"/><rect x="4.4" y=".6" width="1.6" height="1.6" fill="#c9c0a8" opacity=".45"/></pattern></defs><rect width="86" height="86" fill="#5e6a62"/><polygon points="0,0 47,0 44,30 40,33 0,27" fill="#85895f"/><polygon points="47,0 86,0 86,62 76,60 60,56 36,40 44,36 44,30" fill="#66665f"/><rect width="86" height="62" fill="url(#satn)"/><polygon points="36,40 44,36 60,46 86,52 86,62 76,60 60,57" fill="#8d978c"/><polygon points="0,27 40,33 44,36 36,40 32,48 22,42 12,52 0,32" fill="#c6ca86"/><polygon points="0,32 12,52 22,42 32,48 12,86 0,86" fill="#3d7260"/><polygon points="32,47 36,40 60,57 76,60 86,62 86,86 12,86" fill="url(#sat1)"/><path d="M47 0 L44 30 L44 36 L36 40 L32 48 L12 86 M0 32 L12 52 L14 50" stroke="#14201c" stroke-width=".7" fill="none"/></svg>
<span class="t" style="left:1055.30px;top:182.92px;font-size:13.8px;font-weight:700;color:#fff;transform:scaleX(1.0884);">Satellite</span>
<div class="a" style="left:1499px;top:119.3px;width:34px;height:63px;background:rgba(0,0,0,.1);border-radius:6px"></div>
<div class="a" style="left:1501px;top:121.3px;width:30px;height:59px;background:#fff;border-radius:4px"></div>
<div class="a" style="left:1501px;top:150.6px;width:30px;height:1px;background:#ddd"></div>
<svg class="a" style="left:1501px;top:121.3px" width="30" height="59" viewBox="0 0 30 59"><path d="M9.2 15.4 H20.8 M15 9.6 V21.2 M9.6 44.6 H20.4" stroke="#222" stroke-width="2.3" stroke-linecap="round"/></svg>
<div class="a" style="left:1499px;top:189.3px;width:34px;height:34px;background:rgba(0,0,0,.1);border-radius:6px"></div>
<div class="a" style="left:1501px;top:191.3px;width:30px;height:30px;background:#fff;border-radius:4px"></div>
<svg class="a" style="left:1501px;top:191.3px" width="30" height="30" viewBox="0 0 30 30"><circle cx="15" cy="15.2" r="5.6" fill="none" stroke="#222" stroke-width="1.8"/><circle cx="15" cy="15.2" r="2.7" fill="#222"/><path d="M15 7 v2.6 M15 20.8 v2.6 M6.8 15.2 h2.6 M20.6 15.2 h2.6" stroke="#222" stroke-width="1.8"/></svg>
<svg class="a" style="left:1036px;top:948px" width="88" height="22" viewBox="0 0 88 22"><circle cx="10.6" cy="11.2" r="9" fill="#fff" stroke="#9a9a9a" stroke-width="1.5" opacity=".95"/><path d="M6 15.8 C5 11 8 6.4 12.4 6.4 C15.6 6.4 17 9.4 15.4 12.2 C13.6 15.2 9.6 16.4 6 15.8Z" fill="#a9a9a9"/><path d="M11.6 7.6 l.9 2 l2 .9 l-2 .9 l-.9 2 l-.9 -2 l-2 -.9 l2 -.9z" fill="#fff"/><text x="23" y="17" font-family="Liberation Sans, sans-serif" font-weight="700" font-size="16.5" letter-spacing="-.2" fill="#fff" stroke="#8e8e8e" stroke-width="2.2" paint-order="stroke" stroke-linejoin="round">mapbox</text></svg>
<div class="a" style="left:1267.3px;top:956.7px;width:273px;height:14.3px;background:rgba(255,255,255,.5)"></div>
<span class="t" style="left:1271.80px;top:961.24px;font-size:12px;color:#333;transform:scaleX(1.0084);">© Mapbox © OpenStreetMap</span>
<span class="t" style="left:1436.20px;top:961.24px;font-size:12px;font-weight:700;color:#333;transform:scaleX(0.9863);">Improve this map</span>
<div class="a" style="left:1470px;top:907px;width:50px;height:49.5px;background:#686868"></div>
<svg class="a" style="left:1461px;top:905px" width="60" height="54" viewBox="0 0 60 54"><path d="M9.4 21.4 L9.4 31.6 L2 26.5Z" fill="#686868"/><path d="M22.4 17.6 H42.6 C44.4 17.6 45.4 18.6 45.4 20.4 V31.4 C45.4 33.2 44.4 34.2 42.6 34.2 H33.6 L28.6 39.4 V34.2 H22.4 C20.6 34.2 19.6 33.2 19.6 31.4 V20.4 C19.6 18.6 20.6 17.6 22.4 17.6Z" fill="#fff"/><path d="M23.4 22.4 H38 M23.4 26 H41.6 M23.4 29.6 H41.6" stroke="#686868" stroke-width="1.5"/><rect x="35" y="13" width="10" height="9" fill="#686868"/><g fill="none" stroke="#fff" stroke-width="1.3"><path d="M37.4 7.2 h3.8 l-3.8 4.6 h3.8"/><path d="M43.8 11 h4.4 l-4.4 5.4 h4.4"/><path d="M37.2 16 h4.6 l-4.6 5.6 h4.6"/></g></svg>
</div>
</body></html>
